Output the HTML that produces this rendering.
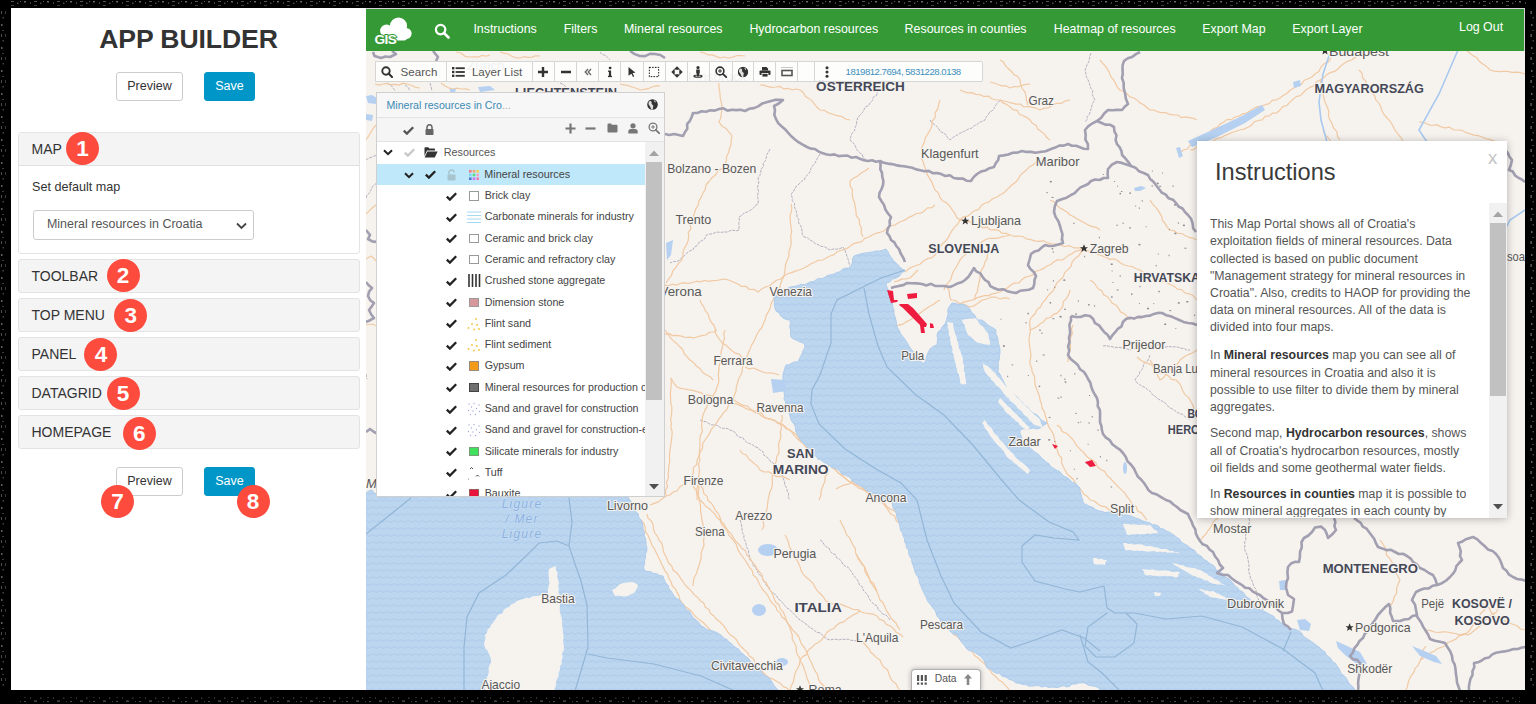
<!DOCTYPE html>
<html><head><meta charset="utf-8">
<style>
*{margin:0;padding:0;box-sizing:border-box}
html,body{width:1536px;height:704px;overflow:hidden;background:#000;font-family:"Liberation Sans",sans-serif}
.a{position:absolute}
#left{left:11px;top:8px;width:355px;height:682px;background:#fff}
#map{left:366px;top:8px;width:1159px;height:682px;overflow:hidden;background:#f6f3ef}
.title{left:0;width:355px;top:16px;text-align:center;font-weight:bold;font-size:26.6px;color:#333;letter-spacing:-0.1px}
.btn{height:29px;border:1px solid #ccc;border-radius:3px;background:#fff;color:#333;font-size:12.5px;text-align:center;line-height:27px}
.btnp{background:#0097c8;border-color:#0097c8;color:#fff}
.acc{left:7px;width:342px;height:34px;border:1px solid #e3e3e3;border-radius:3px;background:#f4f4f4}
.acc span{position:absolute;left:12.5px;top:7.5px;font-size:14px;color:#333}
.num{width:33px;height:33px;border-radius:50%;background:#fd4b3e;color:#fff;font-weight:bold;font-size:22.5px;text-align:center;line-height:33px}
.nav{top:14px;color:#fff;font-size:12.4px;white-space:nowrap}

.tb{top:53px;height:21px;background:rgba(255,255,255,0.8);border:1px solid #d6d6d6;border-right:none}
.tbb{position:absolute;top:0;height:19px;border-right:1px solid #d6d6d6}
.tbb svg{position:absolute;left:50%;top:50%;transform:translate(-50%,-50%)}
.tbt{position:absolute;top:2.6px;font-size:11.6px;color:#555;white-space:nowrap}
#lp{left:10px;top:84px;width:289px;height:405px;background:#fff;border:1px solid #d0d0d0;overflow:hidden}
.row{position:absolute;left:0;width:268px;height:21.3px}
.rt{position:absolute;left:108px;top:4px;font-size:10.7px;color:#444;white-space:nowrap}
.ck{position:absolute;left:69px;top:5px;line-height:0}
.ck svg{display:block}
.lg{position:absolute;left:92px;top:6px;width:10px;height:10px}
#ins{left:831px;top:133px;width:310px;height:376.5px;background:#fff;box-shadow:0 1px 8px rgba(0,0,0,0.28)}
.ip{position:absolute;left:13px;font-size:12.3px;line-height:17.2px;color:#555;white-space:nowrap}
.ip b{color:#333}
</style></head><body>
<svg class="a" style="left:0;top:0" width="1536" height="704">
<defs><pattern id="nz" width="23" height="5" patternUnits="userSpaceOnUse"><rect x="1" y="1" width="2" height="1.5" fill="#bbb"/><rect x="7" y="2" width="1" height="2" fill="#777"/><rect x="11" y="0.5" width="3" height="1.2" fill="#ddd"/><rect x="17" y="2.5" width="1.5" height="1.5" fill="#888"/><rect x="20" y="1" width="1" height="1" fill="#aaa"/></pattern>
<pattern id="nzv" width="5" height="23" patternUnits="userSpaceOnUse"><rect x="1" y="1" width="1.5" height="2" fill="#bbb"/><rect x="2" y="7" width="2" height="1" fill="#777"/><rect x="0.5" y="11" width="1.2" height="3" fill="#ddd"/><rect x="2.5" y="17" width="1.5" height="1.5" fill="#888"/></pattern></defs>
<rect x="10" y="1" width="1516" height="5" fill="url(#nz)" opacity="0.55"/>
<rect x="20" y="697" width="1500" height="5" fill="url(#nz)" opacity="0.4"/>
<rect x="1" y="10" width="5" height="680" fill="url(#nzv)" opacity="0.5"/>
<rect x="1529" y="10" width="5" height="680" fill="url(#nzv)" opacity="0.5"/>
</svg>
<div id="left" class="a">
  <div class="a title">APP BUILDER</div>
  <div class="a btn" style="left:105px;top:64px;width:67px">Preview</div>
  <div class="a btn btnp" style="left:193px;top:64px;width:51px">Save</div>

  <div class="a acc" style="top:124px;height:122px;background:#fff">
    <div class="a" style="left:0;top:0;width:340px;height:33px;background:#f4f4f4;border-bottom:1px solid #e0e0e0"></div>
    <span>MAP</span>
    <div class="a" style="left:13px;top:46.5px;font-size:12.6px;color:#333">Set default map</div>
    <div class="a" style="left:14px;top:77px;width:221px;height:30px;border:1px solid #ccc;border-radius:3px;background:#fff">
      <div class="a" style="left:13px;top:5.5px;font-size:12.45px;color:#555">Mineral resources in Croatia</div>
      <svg class="a" style="left:202px;top:11px" width="11" height="8" viewBox="0 0 11 8"><path d="M1 1.5 L5.5 6 L10 1.5" stroke="#444" stroke-width="1.8" fill="none"/></svg>
    </div>
  </div>
  <div class="a acc" style="top:251px"><span>TOOLBAR</span></div>
  <div class="a acc" style="top:290px"><span>TOP MENU</span></div>
  <div class="a acc" style="top:329px"><span>PANEL</span></div>
  <div class="a acc" style="top:368px"><span>DATAGRID</span></div>
  <div class="a acc" style="top:407px"><span>HOMEPAGE</span></div>

  <div class="a btn" style="left:105px;top:459px;width:67px">Preview</div>
  <div class="a btn btnp" style="left:193px;top:459px;width:51px">Save</div>

  <div class="a num" style="left:55.1px;top:124px">1</div>
  <div class="a num" style="left:95.5px;top:251.2px">2</div>
  <div class="a num" style="left:103.2px;top:290.7px">3</div>
  <div class="a num" style="left:73.4px;top:329.9px">4</div>
  <div class="a num" style="left:95.5px;top:369.1px">5</div>
  <div class="a num" style="left:111.7px;top:408.5px">6</div>
  <div class="a num" style="left:90.1px;top:476.9px">7</div>
  <div class="a num" style="left:225.5px;top:476.9px">8</div>
</div>

<div id="map" class="a">
  <!-- MAPSVG -->
<svg class="a" style="left:0;top:0" width="1159" height="682" viewBox="366 8 1159 682">
<defs><pattern id="wv" width="7.1" height="7" patternUnits="userSpaceOnUse"><path d="M0 4.8 Q3.55 0.6 7.1 4.8" stroke="#afcbe9" stroke-width="0.9" fill="none"/></pattern></defs>
<rect x="366" y="8" width="1159" height="682" fill="#f6f3ef"/>
<polyline points="366.0,160.0 368.8,158.2 372.0,157.0 377.0,155.0" fill="none" stroke="#b3b1c0" stroke-width="1" stroke-dasharray="3 1"/>
<polyline points="366.0,198.0 367.1,195.0 369.6,192.8 371.0,190.0 372.3,186.8 375.1,184.7 377.0,182.0" fill="none" stroke="#b3b1c0" stroke-width="1" stroke-dasharray="3 1"/>
<polyline points="366.0,374.0 367.0,379.0" fill="none" stroke="#b3b1c0" stroke-width="1" stroke-dasharray="3 1"/>
<polyline points="387.0,83.0 389.4,84.8 392.1,86.3 393.7,89.0 396.0,91.0" fill="none" stroke="#b3b1c0" stroke-width="1" stroke-dasharray="3 1"/>
<polyline points="405.0,85.0 408.2,87.4 410.0,91.0" fill="none" stroke="#b3b1c0" stroke-width="1" stroke-dasharray="3 1"/>
<polyline points="430.0,83.0 431.1,87.0 432.0,91.0" fill="none" stroke="#b3b1c0" stroke-width="1" stroke-dasharray="3 1"/>
<polyline points="560.0,83.0 563.0,84.3 565.5,86.4 567.6,88.9 570.0,91.0" fill="none" stroke="#b3b1c0" stroke-width="1" stroke-dasharray="3 1"/>
<polyline points="600.0,52.0 602.1,54.5 605.5,55.4 607.8,57.6 610.0,60.0" fill="none" stroke="#b3b1c0" stroke-width="1" stroke-dasharray="3 1"/>
<polyline points="770.0,149.0 768.6,151.8 766.8,154.5 766.3,157.6 765.4,160.7 763.1,163.1 763.6,166.7 760.9,169.0 760.8,172.4 759.9,175.4 758.0,178.0 758.8,181.2 758.4,184.5 757.4,187.8 758.6,191.0 757.8,194.2 757.7,197.5 758.3,200.8 758.0,204.0 755.2,205.8 753.1,208.4 750.4,210.3 747.5,211.9 744.2,213.0 741.8,215.3 739.0,217.0 739.4,220.2 738.8,223.5 739.1,226.8 739.0,230.0 736.1,230.8 732.9,230.2 729.9,230.8 727.1,232.1 724.0,231.9 721.0,232.4 717.9,232.1 714.9,232.7 712.1,234.0 709.0,234.0 705.9,235.5 704.7,238.9 701.9,240.6 699.0,242.3 697.4,245.4 694.5,247.0 692.7,249.9 689.4,251.1 686.9,253.1 684.7,255.6 681.9,257.3 680.0,260.0 676.8,261.4 673.2,261.6 670.0,263.0" fill="none" stroke="#b3b1c0" stroke-width="1" stroke-dasharray="3 1"/>
<polyline points="820.0,154.0 818.2,156.9 816.5,159.9 815.1,163.0 812.7,165.7 810.9,168.6 810.0,172.0 807.9,174.5 805.5,176.7 804.3,179.9 801.3,181.5 799.2,184.0 796.6,186.0 794.7,188.7 793.4,191.8 791.0,194.0 792.1,197.2 792.4,200.7 794.5,203.6 794.5,207.1 795.9,210.3 796.9,213.5 797.0,217.0 798.8,219.6 798.5,222.9 800.7,225.3 801.5,228.3 802.2,231.2 802.3,234.4 804.0,237.0 807.3,237.7 809.8,239.8 812.6,241.4 815.2,243.5 818.2,244.8 821.0,246.3 824.4,246.7 827.2,248.4 830.0,250.0 833.2,249.0 836.7,249.2 840.0,248.6 843.0,247.0 844.8,249.9 845.9,253.1 847.0,256.3 848.2,259.5 848.9,262.8 850.0,266.0" fill="none" stroke="#b3b1c0" stroke-width="1" stroke-dasharray="3 1"/>
<polyline points="1091.0,53.0 1089.8,55.8 1089.4,58.8 1088.9,61.8 1087.2,64.4 1086.2,67.3 1085.0,70.0 1085.9,73.0 1086.1,76.3 1087.6,79.1 1089.0,82.0 1089.8,85.1 1090.7,88.1 1092.8,90.7 1092.2,94.3 1093.5,97.2 1095.0,100.0 1093.1,102.4 1092.0,105.3 1091.4,108.3 1090.2,111.1 1089.5,114.1 1087.3,116.4 1087.0,119.6 1085.0,122.0" fill="none" stroke="#b3b1c0" stroke-width="1" stroke-dasharray="3 1"/>
<polyline points="1103.0,346.0 1106.1,345.6 1109.1,346.3 1112.1,346.7 1115.0,347.5 1118.1,347.3 1121.1,347.7 1124.1,348.4 1127.1,348.8 1130.0,350.0 1133.0,349.2 1135.8,348.1 1139.1,349.2 1142.0,348.2 1144.9,346.8 1147.9,346.5 1150.9,346.2 1154.0,345.7 1156.9,344.8 1160.0,345.0 1162.9,346.2 1165.8,347.0 1169.0,346.4 1172.0,347.0 1175.1,346.7 1178.1,347.2 1181.1,348.2 1184.1,348.5 1186.9,350.1 1190.0,350.0" fill="none" stroke="#b3b1c0" stroke-width="1" stroke-dasharray="3 1"/>
<polyline points="1150.0,355.0 1148.9,358.1 1147.5,361.0 1144.2,362.9 1143.3,366.1 1142.3,369.3 1139.9,371.6 1139.1,374.9 1136.6,377.2 1135.0,380.0 1136.9,382.7 1139.5,384.6 1142.3,386.3 1145.3,387.6 1147.7,389.8 1150.4,391.5 1152.2,394.4 1155.0,396.1 1157.2,398.4 1160.0,400.0 1162.7,401.4 1165.3,402.9 1167.2,405.5 1169.5,407.5 1172.1,408.9 1174.7,410.5 1177.1,412.2 1179.7,413.7 1182.8,414.5 1185.0,416.7 1187.7,418.1 1190.0,420.0" fill="none" stroke="#b3b1c0" stroke-width="1" stroke-dasharray="3 1"/>
<polyline points="1249.0,518.0 1249.5,521.1 1249.0,524.1 1248.1,527.1 1247.7,530.1 1246.4,532.9 1245.4,535.9 1246.0,539.0 1244.6,541.9 1245.0,545.0 1244.5,548.2 1245.1,551.1 1246.8,554.0 1247.6,556.9 1248.0,559.9 1248.6,562.9 1249.1,565.9 1248.8,569.0 1248.7,572.1 1250.0,575.0 1250.4,578.2 1252.2,580.8 1253.0,583.9 1253.8,586.9 1256.2,589.3 1256.2,592.6 1256.8,595.7 1258.1,598.5 1259.3,601.4 1260.9,604.2 1262.5,606.9 1263.0,610.0" fill="none" stroke="#b3b1c0" stroke-width="1" stroke-dasharray="3 1"/>
<polyline points="700.0,420.0 702.8,421.5 706.1,421.7 708.8,423.6 711.7,424.9 715.1,424.8 718.1,425.8 720.7,427.8 723.9,428.4 727.2,428.4 730.0,430.0 732.9,431.0 735.4,432.8 737.1,435.7 739.7,437.2 742.9,437.7 744.6,440.5 747.0,442.5 749.8,443.6 752.7,444.8 754.9,446.7 757.9,447.7 760.0,450.0 762.9,451.5 763.8,455.1 766.5,456.9 768.9,458.9 770.5,461.7 773.4,463.2 775.0,466.1 777.3,468.2 780.0,470.0 781.5,472.8 782.5,475.8 783.4,478.9 784.5,481.8 784.8,485.1 786.5,487.8 787.2,490.9 788.7,493.8 788.2,497.3 790.0,500.0" fill="none" stroke="#b3b1c0" stroke-width="1" stroke-dasharray="3 1"/>
<polyline points="740.0,520.0 741.1,523.0 741.6,526.1 742.1,529.3 742.3,532.5 744.0,535.3 743.8,538.7 745.4,541.5 746.1,544.6 746.9,547.7 748.6,550.5 748.6,553.8 749.8,556.8 750.0,560.0 752.5,561.9 752.8,565.3 755.5,567.1 756.7,570.0 758.0,572.7 759.9,575.1 762.0,577.3 763.3,580.0 764.9,582.6 766.2,585.3 769.0,587.1 770.0,590.0 772.1,592.2 774.6,593.9 776.7,596.1 778.2,599.0 780.7,600.7 782.8,602.9 784.6,605.4 786.6,607.7 789.4,609.2 791.3,611.6 793.6,613.6 795.7,615.7 797.6,618.1 800.0,620.0 802.6,621.6 805.0,623.4 807.5,625.0 809.5,627.4 812.3,628.7 814.6,630.6 817.0,632.4 820.3,632.9 822.4,635.1 824.5,637.4 827.1,638.9 830.0,640.0 833.0,639.3 836.0,639.2 839.0,639.9 842.0,639.1 845.0,639.5 848.0,639.1 851.0,640.3 854.0,640.6 857.0,640.8 860.0,640.0" fill="none" stroke="#b3b1c0" stroke-width="1" stroke-dasharray="3 1"/>
<polyline points="820.0,540.0 822.6,541.7 824.0,544.6 826.2,546.7 829.1,548.1 830.2,551.3 832.2,553.5 835.4,554.6 836.5,557.8 839.4,559.1 841.4,561.4 842.9,564.3 845.2,566.2 848.3,567.4 850.0,570.0 851.8,572.4 853.3,575.0 855.3,577.3 857.2,579.7 858.6,582.3 859.6,585.2 862.5,587.0 863.2,590.1 865.1,592.4 867.5,594.5 868.6,597.3 870.0,600.0 872.0,602.4 874.4,604.5 877.3,606.1 878.2,609.6 880.7,611.5 882.7,614.0 886.1,615.0 888.1,617.4 890.0,620.0" fill="none" stroke="#b3b1c0" stroke-width="1" stroke-dasharray="3 1"/>
<polyline points="866.0,160.0 863.3,158.1 862.4,154.7 859.6,152.8 857.4,150.5 855.9,147.6 854.6,144.5 852.5,142.1 850.0,140.0 850.8,136.7 851.8,133.5 854.5,130.9 855.1,127.6 856.6,124.5 856.7,120.9 857.9,117.8 860.0,115.0 862.3,112.7 863.9,109.9 865.3,107.0 868.7,105.5 870.2,102.7 872.5,100.4 873.3,97.0 876.6,95.4 877.3,92.0 880.0,90.0" fill="none" stroke="#b3b1c0" stroke-width="1" stroke-dasharray="3 1"/>
<polyline points="930.0,120.0 931.7,122.7 934.5,124.4 936.9,126.4 938.8,129.0 940.5,131.7 943.7,133.0 946.1,135.0 947.7,137.8 950.0,140.0 952.4,138.0 955.0,136.2 957.7,134.8 960.3,133.1 963.2,131.8 966.0,130.4 968.7,128.9 971.8,128.1 974.0,125.8 976.9,124.6 979.3,122.5 982.2,121.3 985.0,120.0 986.1,116.9 988.4,114.7 989.8,111.9 992.9,110.3 994.5,107.6 995.8,104.6 998.1,102.5 1000.0,100.0" fill="none" stroke="#b3b1c0" stroke-width="1" stroke-dasharray="3 1"/>
<polyline points="660.0,333.0 664.1,334.6 668.6,333.4 672.6,335.6 677.0,335.4 681.3,336.1 685.4,337.5 689.8,337.1 694.0,338.0 697.8,336.7 701.8,335.7 705.8,335.0 709.2,332.3 713.4,332.0 717.0,330.0" fill="none" stroke="#f1c9a3" stroke-width="1.2" stroke-linejoin="round"/>
<polyline points="671.0,378.0 673.6,382.8 677.0,387.0 680.8,388.4 684.9,389.0 688.9,389.9 693.0,390.4 696.8,391.6 700.8,392.6 704.3,395.0 708.5,395.1 712.5,396.0 716.5,396.9 720.0,399.6 723.9,400.7 728.0,401.0 731.7,403.0 735.9,403.8 739.8,405.4 743.6,407.2 747.3,409.1 751.4,410.2 755.0,412.4 759.1,413.7 762.3,416.7 766.2,418.4 770.4,419.2 774.5,420.2 777.7,423.3 782.0,424.0 785.2,426.5 788.0,429.3 791.4,431.5 793.7,434.9 796.5,437.8 799.3,440.7 802.7,443.0 805.1,446.2 808.0,449.0 812.0,450.8 815.0,453.9 818.6,456.2 821.6,459.4 825.4,461.4 828.8,464.0 831.8,467.1 835.3,469.6 838.2,472.9 841.6,475.4 845.0,478.0 848.2,480.8 851.8,482.9 855.2,485.3 858.5,487.9 862.6,489.4 866.2,491.6 868.9,495.1 873.4,495.9 876.2,499.2 879.8,501.4 884.1,502.6 886.6,506.4 890.0,508.8 893.8,510.6 897.2,513.1 901.0,515.0" fill="none" stroke="#f1c9a3" stroke-width="1.2" stroke-linejoin="round"/>
<polyline points="725.0,330.0 723.7,334.0 724.6,338.3 723.2,342.2 722.7,346.3 721.4,350.3 720.9,354.3 720.3,358.4 720.2,362.5 719.0,366.5 718.9,370.7 718.3,374.7 718.7,378.9 718.6,383.1 717.0,387.0 715.7,391.4 713.3,395.1 711.8,399.4 708.3,402.7 706.9,406.9 704.7,410.9 703.0,415.0 702.3,419.1 701.7,423.2 701.7,427.4 702.4,431.7 700.2,435.6 699.9,439.8 700.0,444.0 699.8,448.0 699.5,452.0 699.0,456.0 700.1,460.1 698.4,464.0 699.3,468.0 699.4,472.1 698.8,476.0 697.6,480.0 698.5,484.0 697.1,488.0 696.4,491.9 697.2,496.0 697.0,500.0" fill="none" stroke="#f1c9a3" stroke-width="1.2" stroke-linejoin="round"/>
<polyline points="671.0,378.0 671.3,382.1 671.0,386.2 670.6,390.4 670.4,394.5 670.7,398.6 670.7,402.8 671.9,406.9 671.8,411.0 671.5,415.1 670.5,419.2 671.4,423.4 670.9,427.5 672.1,431.6 672.0,435.8 671.5,439.9 671.0,444.0 670.2,448.2 669.7,452.5 669.4,456.7 669.8,461.0 668.9,465.2 668.6,469.5 668.2,473.8 668.5,478.1 666.4,482.2 667.5,486.6 665.4,490.6 666.0,495.0" fill="none" stroke="#f1c9a3" stroke-width="1.2" stroke-linejoin="round"/>
<polyline points="745.0,367.0 749.0,368.9 753.7,368.0 757.8,369.9 761.8,371.7 766.0,373.0 770.5,372.9 774.9,373.5 779.0,375.0" fill="none" stroke="#f1c9a3" stroke-width="1.2" stroke-linejoin="round"/>
<polyline points="782.0,415.0 782.3,419.3 780.3,423.4 781.5,427.8 780.3,432.0 780.9,436.3 779.7,440.5 778.4,444.7 779.0,449.0 778.9,453.1 776.6,456.7 776.4,460.8 774.8,464.5 774.3,468.5 774.5,472.7 772.2,476.3 772.3,480.4 772.4,484.5 771.6,488.5 769.7,492.2 769.0,496.1 768.0,500.0 767.6,504.4 767.1,508.7 765.8,512.9 765.0,517.2 763.0,521.3 763.9,525.9 762.0,530.0" fill="none" stroke="#f1c9a3" stroke-width="1.2" stroke-linejoin="round"/>
<polyline points="830.0,461.0 828.5,464.9 827.3,468.8 827.8,473.2 825.1,476.8 825.0,481.0 823.1,485.6 821.2,490.2 820.9,495.4 819.0,500.0" fill="none" stroke="#f1c9a3" stroke-width="1.2" stroke-linejoin="round"/>
<polyline points="836.0,489.0 840.1,486.7 844.4,484.8 849.2,484.0 853.0,481.0 855.9,478.1 858.4,474.8 861.3,471.9 863.8,468.7 867.0,466.0" fill="none" stroke="#f1c9a3" stroke-width="1.2" stroke-linejoin="round"/>
<polyline points="698.0,483.0 701.0,485.9 703.1,489.4 703.9,493.6 707.1,496.4 708.0,500.6 711.5,503.2 713.6,506.6 715.3,510.3 718.1,513.4 719.9,517.0 721.0,521.1 724.0,524.0 725.9,527.9 728.6,531.2 731.5,534.4 733.6,538.2 736.1,541.7 739.4,544.6 741.7,548.2 745.5,550.7 746.8,555.1 749.9,558.1 752.0,561.9 755.0,565.0 756.9,568.8 759.7,572.0 762.3,575.4 762.8,580.0 766.4,582.8 767.9,586.8 770.3,590.3 772.5,593.9 773.8,598.1 775.5,602.0 779.0,604.8 780.4,608.9 783.2,612.1 785.0,616.0 786.2,619.9 787.9,623.6 789.7,627.3 791.0,631.1 792.3,635.0 792.2,639.3 794.3,642.8 796.2,646.5 796.2,650.8 797.3,654.7 799.8,658.1 801.0,662.0 803.2,665.9 804.5,670.1 806.1,674.1 807.0,678.5 809.0,682.4 810.1,686.7 811.0,691.0" fill="none" stroke="#f1c9a3" stroke-width="1.2" stroke-linejoin="round"/>
<polyline points="698.0,483.0 698.9,487.1 698.6,491.3 698.4,495.5 699.1,499.6 700.2,503.6 700.6,507.8 700.7,511.9 701.5,516.0 702.0,520.2 703.0,524.2 702.9,528.4 701.8,532.7 704.0,536.7 703.6,540.9 704.0,545.0 702.6,549.0 701.0,553.0 701.3,557.5 700.1,561.5 699.0,565.6 697.6,569.7 696.4,573.7 694.2,577.5 693.4,581.7 693.0,586.0" fill="none" stroke="#f1c9a3" stroke-width="1.2" stroke-linejoin="round"/>
<polyline points="647.0,514.0 648.0,518.1 651.4,521.0 653.1,524.8 653.5,529.1 654.9,533.0 657.5,536.4 659.0,540.2 661.9,543.4 662.8,547.5 663.5,551.7 665.4,555.4 667.1,559.1 668.6,563.0 671.8,566.0 673.0,570.0 676.4,572.5 679.0,575.6 681.2,579.2 683.6,582.5 685.9,586.0 689.0,588.7 691.9,591.7 694.4,594.9 697.7,597.5 700.2,600.7 703.8,603.1 705.3,607.2 709.0,609.5 710.6,613.5 714.0,616.0 716.5,619.3 719.8,621.8 722.8,624.7 725.3,627.9 727.4,631.5 730.1,634.7 733.8,636.9 736.6,639.9 738.6,643.6 741.2,646.8 744.3,649.6 747.3,652.4 749.4,656.0 753.1,658.2 755.0,662.0" fill="none" stroke="#f1c9a3" stroke-width="1.2" stroke-linejoin="round"/>
<polyline points="785.0,535.0 787.2,538.7 788.6,542.7 789.4,547.1 791.8,550.7 793.1,554.8 795.7,558.3 798.0,562.0 799.7,565.9 801.0,570.0 803.0,574.1 806.2,577.2 809.7,580.1 812.9,583.1 814.9,587.2 817.4,590.9 820.6,594.0 823.6,597.2 826.0,601.0 829.8,602.5 833.6,604.2 837.9,603.9 842.0,604.6 845.7,606.4 849.6,607.8 853.3,609.5 857.6,609.6 861.1,612.0 865.1,613.0 869.2,613.7 873.3,614.2 877.0,616.0 879.6,619.4 883.8,620.9 886.3,624.4 890.4,626.0 893.6,628.6 896.1,632.2 900.0,634.0 903.0,637.0" fill="none" stroke="#f1c9a3" stroke-width="1.2" stroke-linejoin="round"/>
<polyline points="857.0,555.0 858.1,559.1 861.0,562.2 863.6,565.5 865.5,569.1 867.2,572.9 868.7,576.8 870.1,580.7 873.7,583.4 875.2,587.3 877.0,591.0" fill="none" stroke="#f1c9a3" stroke-width="1.2" stroke-linejoin="round"/>
<polyline points="1057.0,425.0 1060.4,427.5 1062.2,431.6 1066.4,433.3 1069.5,436.1 1072.4,439.0 1074.8,442.5 1077.0,446.2 1080.0,449.2 1083.1,451.9 1085.7,455.2 1088.7,458.1 1092.6,460.1 1095.8,462.8 1097.5,466.9 1100.8,469.5 1104.8,471.4 1106.8,475.3 1110.0,478.0 1113.0,481.1 1115.9,484.3 1118.8,487.4 1121.9,490.4 1125.1,493.4 1127.4,497.1 1130.2,500.4 1132.0,504.5 1136.2,506.5 1137.7,511.0 1141.8,513.1 1144.4,516.6 1147.0,520.0" fill="none" stroke="#f1c9a3" stroke-width="1.2" stroke-linejoin="round"/>
<polyline points="1137.0,357.0 1140.1,359.8 1143.6,361.9 1147.6,363.4 1151.5,364.8 1154.5,367.8 1158.1,369.8 1161.0,373.0 1165.4,373.8 1168.7,376.2 1171.5,379.4 1176.0,380.0 1179.0,383.0 1181.3,386.6 1182.7,390.8 1184.9,394.4 1188.4,397.4 1190.6,401.1 1192.7,404.8 1194.0,409.0" fill="none" stroke="#f1c9a3" stroke-width="1.2" stroke-linejoin="round"/>
<polyline points="1073.0,325.0 1071.5,329.0 1072.4,333.3 1070.8,337.3 1069.9,341.3 1070.6,345.6 1070.2,349.7 1068.1,353.6 1068.3,357.9 1068.0,362.0" fill="none" stroke="#f1c9a3" stroke-width="1.2" stroke-linejoin="round"/>
<polyline points="1242.0,593.0 1244.6,596.2 1245.9,600.3 1248.8,603.3 1251.1,606.7 1253.8,609.9 1254.5,614.3 1256.4,618.0 1259.1,621.2 1260.7,625.0 1264.6,627.4 1266.3,631.2 1268.0,635.0" fill="none" stroke="#f1c9a3" stroke-width="1.2" stroke-linejoin="round"/>
<polyline points="1426.0,630.0 1430.2,630.4 1434.3,632.0 1438.5,632.5 1442.8,631.8 1447.1,632.0 1451.2,632.8 1455.4,633.5 1459.5,634.9 1463.9,633.8 1468.0,635.0 1471.5,632.9 1474.5,630.2 1477.7,627.8 1480.7,625.1 1483.6,622.3 1486.3,619.2 1489.3,616.6 1492.5,614.1 1496.1,612.2 1498.2,608.5 1501.5,606.1 1505.0,604.0" fill="none" stroke="#f1c9a3" stroke-width="1.2" stroke-linejoin="round"/>
<polyline points="1405.0,691.0 1407.3,687.5 1408.0,683.3 1409.4,679.3 1411.1,675.6 1413.9,672.3 1415.2,668.3 1418.2,665.2 1419.8,661.4 1421.7,657.7 1422.0,653.3 1423.4,649.4 1426.0,646.0" fill="none" stroke="#f1c9a3" stroke-width="1.2" stroke-linejoin="round"/>
<polyline points="1050.0,200.0 1053.9,201.8 1056.7,205.0 1059.7,207.9 1063.4,209.9 1067.0,212.0 1070.0,215.0 1073.8,216.7 1077.4,219.0 1081.1,221.0 1084.8,223.0 1088.4,225.1 1092.3,226.6 1096.6,227.4 1100.0,230.0" fill="none" stroke="#f1c9a3" stroke-width="1.2" stroke-linejoin="round"/>
<polyline points="990.0,250.0 987.6,253.9 987.1,258.5 984.9,262.4 983.6,266.8 981.2,270.6 980.0,275.0 979.8,279.3 978.9,283.4 978.0,287.6 977.4,291.8 975.0,295.7 975.0,300.0" fill="none" stroke="#f1c9a3" stroke-width="1.2" stroke-linejoin="round"/>
<polyline points="366.0,140.0 368.6,136.1 371.0,132.0 373.2,128.3 376.0,125.0" fill="none" stroke="#f1c9a3" stroke-width="1.2" stroke-linejoin="round"/>
<polyline points="366.0,214.0 371.0,209.0 377.0,204.0" fill="none" stroke="#f1c9a3" stroke-width="1.2" stroke-linejoin="round"/>
<polyline points="366.0,259.0 371.0,256.0 374.2,258.8 377.0,262.0" fill="none" stroke="#f1c9a3" stroke-width="1.2" stroke-linejoin="round"/>
<polyline points="366.0,325.0 372.0,324.0 377.0,326.0" fill="none" stroke="#f1c9a3" stroke-width="1.2" stroke-linejoin="round"/>
<polyline points="375.0,84.0 379.0,85.1 383.0,84.0 387.0,83.4 391.0,84.7 395.0,84.3 399.0,85.1 403.0,83.1 407.0,84.0 411.3,85.3 415.5,87.3 420.0,88.0" fill="none" stroke="#f1c9a3" stroke-width="1.2" stroke-linejoin="round"/>
<polyline points="441.0,83.0 444.7,85.7 448.6,87.8 453.0,89.0 457.3,88.2 461.5,89.0 465.8,88.9 470.0,90.0" fill="none" stroke="#f1c9a3" stroke-width="1.2" stroke-linejoin="round"/>
<polyline points="456.0,52.0 460.9,53.0 465.0,56.3 470.0,57.0 474.0,56.8 478.1,57.1 482.0,55.5 486.1,56.2 490.0,55.0" fill="none" stroke="#f1c9a3" stroke-width="1.2" stroke-linejoin="round"/>
<polyline points="500.0,52.0 504.0,53.1 508.2,53.9 511.8,56.2 515.7,57.7 520.0,58.0 523.9,56.7 528.0,57.4 532.0,57.1 535.9,55.8 540.0,56.0" fill="none" stroke="#f1c9a3" stroke-width="1.2" stroke-linejoin="round"/>
<polyline points="620.0,84.0 624.1,84.9 628.2,85.6 632.2,87.0 636.2,88.3 640.0,90.0 644.0,89.4 648.1,88.7 651.9,87.0 655.8,85.7 660.0,86.0" fill="none" stroke="#f1c9a3" stroke-width="1.2" stroke-linejoin="round"/>
<polyline points="700.0,52.0 704.1,52.8 707.9,54.8 712.2,54.9 716.1,56.4 720.0,58.0 724.1,57.0 728.4,58.0 732.5,57.1 736.6,55.7 740.8,55.5 745.0,56.0" fill="none" stroke="#f1c9a3" stroke-width="1.2" stroke-linejoin="round"/>
<polyline points="990.0,82.0 994.1,83.0 998.0,84.5 1001.9,85.9 1006.3,85.9 1010.0,88.0 1013.9,86.5 1018.1,86.8 1022.0,85.4 1025.9,84.3 1030.0,84.0" fill="none" stroke="#f1c9a3" stroke-width="1.2" stroke-linejoin="round"/>
<polyline points="1180.0,153.0 1183.1,150.3 1187.3,149.0 1189.9,145.5 1193.6,143.6 1196.7,140.8 1200.2,138.5 1204.2,137.0 1207.7,134.8 1210.3,131.3 1213.5,128.6 1217.5,127.2 1220.2,123.9 1224.0,122.0 1227.3,119.4 1231.8,119.6 1235.1,117.0 1239.2,116.2 1242.6,113.8 1246.7,113.2 1250.1,110.7 1253.6,108.5 1257.2,106.6 1261.4,106.1 1265.2,104.7 1269.2,103.6 1272.2,100.4 1276.4,99.8 1280.0,98.0 1283.3,95.4 1287.0,93.2 1290.1,90.2 1293.7,88.0 1297.5,86.0 1301.5,84.4 1304.0,80.5 1308.0,78.8 1311.9,77.0 1315.0,74.0 1318.9,71.5 1320.9,67.1 1324.0,63.8 1328.5,61.9 1331.0,58.0" fill="none" stroke="#f1c9a3" stroke-width="1.2" stroke-linejoin="round"/>
<polyline points="1323.0,130.0 1324.8,134.6 1328.4,138.0 1331.0,142.0" fill="none" stroke="#f1c9a3" stroke-width="1.2" stroke-linejoin="round"/>
<polyline points="1359.0,70.0 1362.0,73.2 1362.5,77.9 1365.7,81.0 1366.8,85.2 1369.5,88.6 1371.3,92.5 1374.7,95.5 1375.7,99.9 1378.9,102.9 1380.7,106.8 1382.0,111.0 1384.2,114.7 1387.0,118.0 1389.9,121.0 1392.1,124.5 1394.0,128.2 1396.1,131.7 1398.6,135.0 1401.4,138.1 1403.0,142.0" fill="none" stroke="#f1c9a3" stroke-width="1.2" stroke-linejoin="round"/>
<polyline points="1419.0,122.0 1423.4,122.3 1427.6,124.3 1431.8,125.5 1436.5,124.6 1440.6,126.6 1444.9,127.9 1449.5,127.2 1453.5,129.8 1458.0,130.0 1462.2,130.4 1465.9,132.6 1470.0,133.7 1473.9,135.1 1478.1,135.6 1482.1,137.0 1485.9,138.6 1490.0,139.4 1493.9,141.1 1498.0,142.0" fill="none" stroke="#f1c9a3" stroke-width="1.2" stroke-linejoin="round"/>
<polyline points="1466.0,50.0 1469.5,52.8 1472.9,55.6 1477.0,57.8 1479.5,61.6 1483.2,64.3 1486.9,66.7 1490.0,70.0 1494.3,71.1 1498.7,71.6 1503.1,71.4 1507.6,71.3 1511.9,72.4 1516.3,72.1 1520.7,72.7 1525.0,74.0" fill="none" stroke="#f1c9a3" stroke-width="1.2" stroke-linejoin="round"/>
<polyline points="894.0,282.0 898.0,280.9 901.8,279.1 906.0,278.9 910.0,278.0 914.0,274.0 918.0,270.0" fill="none" stroke="#f1c9a3" stroke-width="1.2" stroke-linejoin="round"/>
<polyline points="947.0,287.0 949.3,291.0 949.4,295.8 951.0,300.0 955.3,300.5 958.8,303.2 963.0,304.0 970.0,307.0 974.5,305.6 978.4,303.0 982.2,300.1 986.8,299.0 991.0,297.0 995.8,297.2 1000.4,299.0 1005.3,297.7 1010.0,299.0" fill="none" stroke="#f1c9a3" stroke-width="1.2" stroke-linejoin="round"/>
<polyline points="1030.0,330.0 1033.8,328.4 1037.3,326.5 1040.3,323.8 1043.7,321.7 1046.3,318.3 1050.6,317.5 1053.3,314.4 1057.2,313.1 1060.0,310.0 1062.8,306.4 1063.3,301.7 1066.6,298.3 1068.8,294.4 1070.0,290.0" fill="none" stroke="#f1c9a3" stroke-width="1.2" stroke-linejoin="round"/>
<polyline points="1090.0,280.0 1093.5,282.2 1095.9,285.5 1098.2,289.0 1102.0,290.9 1103.7,294.9 1107.5,296.8 1110.0,300.0 1112.4,303.3 1116.3,305.2 1118.6,308.6 1120.8,312.1 1124.7,313.8 1127.5,316.8 1130.0,320.0" fill="none" stroke="#f1c9a3" stroke-width="1.2" stroke-linejoin="round"/>
<polyline points="1150.0,200.0 1152.2,203.3 1154.8,206.4 1157.5,209.4 1159.5,212.9 1161.7,216.3 1162.5,220.5 1165.2,223.6 1167.1,227.1 1170.0,230.0 1174.1,230.7 1177.5,233.4 1181.9,233.5 1185.4,235.8 1189.2,237.4 1193.2,238.3 1197.0,240.0" fill="none" stroke="#f1c9a3" stroke-width="1.2" stroke-linejoin="round"/>
<polyline points="1000.0,100.0 1002.9,102.9 1006.6,104.5 1009.9,106.8 1012.9,109.6 1017.1,110.4 1019.4,114.2 1023.2,115.8 1026.8,117.6 1030.0,120.0 1032.4,123.3 1036.1,125.3 1037.8,129.3 1041.3,131.5 1044.5,134.1 1046.7,137.6 1050.0,140.0" fill="none" stroke="#f1c9a3" stroke-width="1.2" stroke-linejoin="round"/>
<polyline points="940.0,100.0 938.7,104.3 937.8,108.8 935.2,112.7 935.2,117.5 932.2,121.2 931.9,125.9 930.0,130.0 927.9,133.9 925.4,137.6 924.4,141.9 922.5,145.9 921.0,150.0" fill="none" stroke="#f1c9a3" stroke-width="1.2" stroke-linejoin="round"/>
<polyline points="1100.0,60.0 1102.6,63.1 1105.4,66.1 1107.5,69.4 1109.5,72.9 1110.9,76.8 1113.5,79.9 1115.5,83.3 1117.1,87.1 1120.0,90.0 1123.8,91.5 1127.0,93.9 1129.8,96.9 1133.9,98.0 1137.3,100.2 1140.2,103.1 1143.8,104.8 1146.8,107.5 1150.0,110.0 1154.0,110.2 1157.8,111.8 1161.7,112.7 1165.8,112.7 1169.5,114.4 1173.5,114.9 1177.6,115.0 1181.1,117.6 1185.4,116.9 1189.3,117.6 1193.3,118.3 1197.0,120.0" fill="none" stroke="#f1c9a3" stroke-width="1.2" stroke-linejoin="round"/>
<polyline points="665.0,330.0 667.5,333.5 669.9,337.2 672.9,340.4 676.3,343.2 679.3,346.3 682.5,349.3 684.2,353.5 687.1,356.8 690.0,360.0 693.5,362.6 696.4,366.0 699.9,368.5 702.5,372.2 706.1,374.7 710.1,376.7 713.0,380.0" fill="none" stroke="#f1c9a3" stroke-width="1.2" stroke-linejoin="round"/>
<polyline points="740.0,450.0 742.2,453.5 746.4,455.0 748.5,458.6 751.6,461.3 754.7,463.9 757.8,466.5 760.0,470.0 764.1,472.0 768.9,471.8 772.8,474.4 776.8,476.6 781.7,476.4 785.9,477.9 790.0,480.0" fill="none" stroke="#f1c9a3" stroke-width="1.2" stroke-linejoin="round"/>
<polyline points="840.0,520.0 841.6,523.7 843.6,527.3 845.2,531.0 846.7,534.9 849.7,537.9 851.3,541.6 853.1,545.3 855.4,548.6 855.6,553.1 857.6,556.6 860.0,560.0 861.4,563.8 864.6,566.8 864.8,571.2 866.8,574.8 869.2,578.1 870.4,582.1 872.8,585.4 875.1,588.8 877.1,592.3 878.7,596.1 880.0,600.0 883.1,602.8 884.7,606.5 886.2,610.3 888.5,613.6 890.5,617.1 892.9,620.3 896.0,623.0 897.7,626.7 900.0,630.0" fill="none" stroke="#f1c9a3" stroke-width="1.2" stroke-linejoin="round"/>
<polyline points="790.0,690.0 791.3,685.7 793.5,681.6 794.3,677.2 795.2,672.7 797.4,668.7 799.5,664.6 800.0,660.0 802.6,656.6 806.6,654.6 808.2,650.2 811.6,647.6 814.6,644.6 818.4,642.4 821.7,639.7 824.4,636.4 826.7,632.7 830.0,630.0 833.8,628.5 836.5,625.2 839.7,622.9 843.8,621.9 846.8,619.1 850.2,617.0 853.5,614.7 857.3,613.1 860.0,610.0" fill="none" stroke="#f1c9a3" stroke-width="1.2" stroke-linejoin="round"/>
<polyline points="1200.0,541.0 1202.4,537.5 1205.6,534.4 1207.9,530.8 1210.6,527.5 1212.4,523.4 1215.0,520.0 1218.4,517.9 1221.3,515.1 1224.1,512.2 1227.1,509.5 1230.8,507.7 1233.2,504.3 1237.4,503.2 1240.0,500.0" fill="none" stroke="#f1c9a3" stroke-width="1.2" stroke-linejoin="round"/>
<polyline points="1380.0,540.0 1382.5,543.3 1384.6,546.8 1386.2,550.5 1386.4,555.0 1389.4,558.0 1391.6,561.5 1393.7,565.0 1395.4,568.6 1396.0,572.9 1397.9,576.5 1400.0,580.0 1398.2,584.1 1396.6,588.4 1396.6,593.2 1394.1,597.1 1393.1,601.5 1390.8,605.5 1390.0,610.0" fill="none" stroke="#f1c9a3" stroke-width="1.2" stroke-linejoin="round"/>
<polyline points="1480.0,600.0 1482.4,603.4 1485.1,606.3 1489.2,607.9 1490.9,612.0 1493.6,614.9 1496.5,617.8 1500.0,620.0 1504.5,620.9 1508.6,622.7 1512.8,624.2 1517.0,625.7 1520.5,629.0 1525.0,630.0" fill="none" stroke="#f1c9a3" stroke-width="1.2" stroke-linejoin="round"/>
<polyline points="719.0,83.0 718.9,87.7 719.9,92.2 720.1,96.9 721.1,101.4 722.0,106.0 721.7,110.1 721.4,114.2 720.6,118.2 719.0,122.0 721.8,125.9 726.0,128.6 729.0,132.2 732.0,136.0 731.2,140.2 731.0,144.5 729.5,148.6 728.5,152.7 726.5,156.6 726.3,160.9 725.0,165.0 722.1,168.6 717.9,171.0 715.5,175.0 711.8,177.8 709.0,181.5 706.0,185.0 705.3,189.4 702.9,193.1 701.3,197.1 698.9,200.8 698.2,205.1 695.8,208.8 694.5,213.0 693.0,217.0 692.6,221.1 690.2,224.6 690.9,228.9 688.3,232.4 688.7,236.7 688.1,240.7 686.6,244.5 684.4,248.1 683.0,251.8 683.0,256.0 681.5,260.4 678.2,263.7 675.7,267.6 672.7,271.1 671.4,275.7 668.4,279.1 666.0,283.0" fill="none" stroke="#f1c9a3" stroke-width="1.2" stroke-linejoin="round"/>
<polyline points="660.0,286.0 664.0,285.2 668.2,285.9 672.1,284.2 676.4,285.2 680.3,283.3 684.3,282.8 688.5,283.4 692.5,282.5 696.5,281.2 700.7,281.9 704.6,280.3 708.8,281.4 712.9,280.7 716.9,280.5 721.0,279.7 725.0,279.0 729.2,280.3 733.3,282.0 737.5,283.7 741.2,286.3 746.0,286.3 749.4,289.5 754.3,289.4 758.0,292.0 761.4,289.2 765.2,287.0 769.6,285.9 772.9,282.9 776.4,280.3 780.7,279.0 784.0,276.0 787.6,273.8 791.6,272.6 795.5,271.1 799.6,269.8 803.4,268.2 807.1,266.3 810.7,264.0 814.5,262.3 818.2,260.3 822.6,260.0 826.3,258.0 830.0,256.0 834.1,254.6 837.5,251.5 841.6,250.2 845.9,248.9 849.6,246.7 853.0,243.9 857.3,242.6 861.6,241.6 864.8,238.4 869.0,237.0 872.4,234.7 876.2,233.2 880.3,232.3 884.2,230.8 887.3,227.7 891.0,226.0 895.0,225.0 898.4,222.7 902.1,221.0 905.9,219.6 909.2,217.1 913.0,215.6 916.5,213.5 920.9,213.2 924.3,210.9 927.3,207.9 931.8,207.7 935.0,205.0" fill="none" stroke="#f1c9a3" stroke-width="1.2" stroke-linejoin="round"/>
<polyline points="791.0,204.0 791.9,208.0 791.3,212.0 789.9,216.0 790.4,220.0 790.5,224.0 791.1,228.0 791.7,232.0 790.7,236.0 791.0,240.0 791.1,244.2 790.1,248.1 788.9,252.0 788.9,256.2 787.3,260.0 785.7,263.9 785.1,267.9 784.8,272.0 784.0,276.0 782.0,279.9 780.6,284.0 779.5,288.3 776.9,291.9 775.6,296.1 773.1,299.8 771.1,303.6 770.3,308.1 768.3,311.9 766.2,315.8 765.0,320.0 763.3,323.7 761.9,327.5 759.1,330.7 757.0,334.2 755.4,337.9 753.7,341.6 751.6,345.1 750.1,348.9 748.4,352.6 746.9,356.4 745.0,360.0 744.2,364.0 742.3,367.7 742.2,372.0 740.4,375.7 738.4,379.3 737.4,383.3 736.3,387.2 735.9,391.4 734.4,395.1 733.0,399.0" fill="none" stroke="#f1c9a3" stroke-width="1.2" stroke-linejoin="round"/>
<polyline points="869.0,168.0 865.3,170.7 861.2,173.0 857.7,176.0 853.6,178.1 850.0,181.0 849.9,185.5 852.4,189.4 852.2,193.9 852.8,198.3 854.5,202.4 855.2,206.7 856.0,211.0 856.2,215.6 859.3,219.4 859.4,224.0 861.4,228.1 861.2,232.8 863.0,237.0" fill="none" stroke="#f1c9a3" stroke-width="1.2" stroke-linejoin="round"/>
<polyline points="733.0,399.0 729.9,401.9 728.3,405.8 726.7,409.7 723.5,412.6 721.3,416.0 718.6,419.2 716.6,422.9 714.1,426.2 711.4,429.3 709.6,433.1 707.5,436.7 705.0,440.0 702.6,443.7 702.6,448.2 700.1,451.9 699.2,456.1 697.0,459.8 696.8,464.3 693.5,467.6 693.3,472.1 692.4,476.3 690.0,480.0 692.4,483.8 694.2,487.9 697.0,491.5 698.2,495.9 700.0,500.0 703.0,502.7 705.4,506.0 708.8,508.3 711.8,511.1 714.7,513.9 716.8,517.5 720.0,520.0 721.5,524.1 724.5,527.3 727.3,530.6 728.5,534.9 731.6,538.1 734.2,541.5 736.6,545.0 737.7,549.4 739.9,553.1 742.5,556.5 745.0,560.0 747.3,563.6 749.4,567.3 752.3,570.6 753.2,575.1 756.6,578.0 758.4,582.0 760.3,585.8 762.6,589.5 765.5,592.7 768.1,596.1 770.0,600.0 772.4,603.4 775.7,606.2 776.9,610.4 780.3,613.1 781.9,617.1 785.4,619.7 787.7,623.2 790.4,626.3 792.6,629.9 795.6,632.9 798.4,636.0 800.0,640.0 801.5,644.1 804.3,647.5 806.3,651.3 808.1,655.2 809.7,659.2 811.7,663.0 813.2,667.1 815.1,670.9 817.6,674.5 818.4,678.9 820.5,682.7 823.9,685.7 825.0,690.0" fill="none" stroke="#f1c9a3" stroke-width="1.2" stroke-linejoin="round"/>
<polyline points="733.0,399.0 736.2,401.6 739.7,403.7 743.4,405.4 747.6,406.1 750.5,409.3 754.2,410.9 758.4,411.6 762.0,413.6 764.6,417.3 768.5,418.7 772.5,419.8 776.2,421.5 779.7,423.5 783.2,425.6 786.1,428.6 790.0,430.0 793.3,432.4 796.6,434.8 798.6,438.7 801.8,441.2 805.8,442.8 807.8,446.6 811.2,448.8 814.0,451.8 817.3,454.3 820.0,457.3 823.2,459.8 826.2,462.6 830.2,464.2 832.5,467.7 835.8,470.1 838.5,473.1 842.0,475.2 845.0,478.0 848.1,480.9 851.9,482.5 855.8,484.2 859.3,486.3 862.9,488.3 866.0,491.2 870.0,492.6 873.0,495.5 876.9,497.1 880.0,500.0 882.8,503.3 885.6,506.7 888.3,510.1 890.5,513.8 894.7,516.0 896.1,520.5 899.5,523.3 902.1,526.8 905.0,530.0 906.0,534.1 907.0,538.2 909.3,541.9 910.5,545.9 910.7,550.3 913.9,553.7 914.0,558.1 915.4,562.1 918.0,565.7 918.1,570.1 919.3,574.1 920.1,578.3 922.7,581.9 922.7,586.3 925.0,590.0 927.0,593.5 929.0,597.0 930.2,600.9 933.9,603.5 934.6,607.7 936.8,611.1 939.3,614.3 940.3,618.4 943.3,621.4 945.0,625.0 948.0,628.0 951.0,631.0 953.6,634.4 957.5,636.5 960.1,639.9 963.1,642.9 965.9,646.1 968.5,649.5 972.3,651.7 974.5,655.5 978.1,657.9 981.0,661.0 984.4,663.6 987.0,667.0 990.0,670.0 992.1,673.7 995.5,676.2 998.1,679.4 1001.7,681.7 1004.6,684.7 1007.5,687.7 1010.0,691.0" fill="none" stroke="#f1c9a3" stroke-width="1.2" stroke-linejoin="round"/>
<polyline points="690.0,480.0 686.6,482.3 683.2,484.8 679.6,487.0 677.3,490.8 673.0,492.1 670.0,495.0 665.6,496.2 662.0,498.9 658.4,501.9 654.2,503.4 650.0,505.0" fill="none" stroke="#f1c9a3" stroke-width="1.2" stroke-linejoin="round"/>
<polyline points="641.0,520.0 643.7,523.2 645.1,527.0 645.3,531.3 647.7,534.6 649.3,538.3 650.8,542.1 652.3,545.8 654.6,549.2 656.3,552.8 658.0,556.5 660.0,560.0 661.4,563.8 663.4,567.4 665.1,571.1 667.8,574.3 668.8,578.3 671.0,581.8 672.2,585.7 675.3,588.7 677.0,592.4 679.1,595.9 680.0,600.0 682.4,603.3 685.1,606.4 688.3,608.8 691.6,611.2 693.8,614.8 696.7,617.6 699.9,620.1 703.2,622.5 706.0,625.4 708.7,628.4 711.7,631.1 714.4,634.2 716.9,637.4 720.0,640.0 722.8,643.3 727.3,644.2 729.9,647.6 733.9,649.2 737.2,651.8 739.6,655.5 743.2,657.6 746.1,660.7 750.1,662.4 754.0,664.1 756.8,667.3 760.0,670.0 763.2,672.5 766.1,675.5 769.4,677.9 773.4,679.3 776.8,681.5 780.5,683.3 783.2,686.6 787.0,688.1 790.0,691.0" fill="none" stroke="#f1c9a3" stroke-width="1.2" stroke-linejoin="round"/>
<polyline points="960.0,220.0 964.1,220.4 968.0,221.3 971.9,222.4 975.3,225.0 979.5,225.0 982.8,227.9 987.2,227.2 990.5,230.0 994.8,229.6 998.8,230.5 1002.2,233.2 1006.3,233.3 1010.0,235.0 1014.1,236.3 1018.5,236.0 1022.7,236.5 1026.5,238.9 1030.7,239.6 1034.8,240.8 1039.1,241.3 1043.5,240.8 1047.4,242.8 1051.6,243.8 1055.9,244.1 1060.0,245.0 1064.5,246.5 1069.3,245.7 1073.7,247.8 1078.3,247.9 1083.0,248.0" fill="none" stroke="#f1c9a3" stroke-width="1.2" stroke-linejoin="round"/>
<polyline points="1083.0,248.0 1081.3,252.2 1078.8,255.7 1075.1,258.5 1072.2,261.8 1071.0,266.3 1068.0,269.6 1064.7,272.6 1063.2,276.9 1060.0,280.0 1056.9,282.9 1055.0,286.7 1053.3,290.6 1050.2,293.5 1047.4,296.6 1045.1,300.1 1042.2,303.1 1040.6,307.1 1037.0,309.6 1035.2,313.5 1032.2,316.5 1030.0,320.0 1029.7,324.0 1030.2,328.0 1030.3,332.0 1029.4,336.0 1029.0,340.0 1029.4,344.0 1029.9,348.0 1030.5,352.0 1031.0,356.0 1030.0,360.0 1030.0,364.3 1031.6,368.1 1032.3,372.2 1034.4,375.9 1034.8,380.1 1035.0,384.3 1036.3,388.2 1037.8,392.1 1039.4,395.9 1040.0,400.0 1041.5,403.8 1042.0,408.1 1044.4,411.6 1045.2,415.7 1046.7,419.5 1047.5,423.6 1049.1,427.4 1051.6,431.0 1053.5,434.6 1054.4,438.7 1055.4,442.7 1056.5,446.7 1057.4,450.8 1058.6,454.7 1061.8,458.0 1061.5,462.5 1063.0,466.3 1065.0,470.0 1067.2,473.9 1070.4,476.8 1073.7,479.7 1075.5,483.8 1078.4,487.1 1081.4,490.3 1083.7,493.9 1087.5,496.5 1090.0,500.0 1094.3,501.0 1097.7,503.8 1101.3,506.2 1105.7,506.8 1109.0,509.8 1112.7,512.0 1117.0,513.0" fill="none" stroke="#f1c9a3" stroke-width="1.2" stroke-linejoin="round"/>
<polyline points="960.0,220.0 958.0,223.8 954.8,226.9 952.2,230.3 950.1,234.0 948.0,237.9 945.4,241.3 942.1,244.2 939.5,247.6 937.6,251.6 935.0,255.0 931.7,257.9 927.2,258.7 923.5,260.9 920.3,264.0 916.2,265.5 912.1,267.0 908.3,269.1 905.0,272.0" fill="none" stroke="#f1c9a3" stroke-width="1.2" stroke-linejoin="round"/>
<polyline points="961.0,303.0 964.9,301.9 968.8,300.8 972.8,299.9 976.4,297.9 980.3,296.8 984.2,295.7 988.4,295.7 992.1,293.9 996.1,293.2 1000.0,292.0 1003.5,289.8 1007.3,288.0 1010.5,285.3 1014.1,283.1 1018.7,283.0 1021.7,279.8 1025.0,277.2 1029.2,276.3 1033.0,274.6 1036.0,271.3 1040.0,270.0 1043.7,268.4 1047.0,266.0 1050.8,264.5 1053.9,261.7 1057.4,259.9 1062.0,260.0 1065.5,257.9 1068.7,255.3 1072.3,253.6 1075.6,251.2 1079.7,250.4 1083.0,248.0" fill="none" stroke="#f1c9a3" stroke-width="1.2" stroke-linejoin="round"/>
<polyline points="1036.0,162.0 1033.1,164.9 1029.3,166.8 1026.6,169.8 1023.5,172.5 1020.3,175.0 1018.4,178.9 1015.7,182.0 1012.4,184.5 1009.5,187.3 1006.6,190.2 1003.7,193.0 1000.0,195.0 996.3,197.2 992.3,198.9 989.1,201.9 984.9,203.3 981.3,205.6 978.7,209.4 974.4,210.7 971.0,213.4 967.7,216.2 963.1,216.9 960.0,220.0" fill="none" stroke="#f1c9a3" stroke-width="1.2" stroke-linejoin="round"/>
<polyline points="921.0,158.0 923.2,161.8 924.4,166.1 926.0,170.1 927.1,174.4 929.4,178.1 931.7,181.9 933.4,186.0 935.0,190.0 938.4,192.9 939.8,197.3 942.5,200.7 946.6,202.9 949.7,206.0 952.1,209.7 954.7,213.1 956.5,217.2 960.0,220.0" fill="none" stroke="#f1c9a3" stroke-width="1.2" stroke-linejoin="round"/>
<polyline points="1083.0,248.0 1086.5,250.3 1090.3,251.6 1094.8,251.5 1098.0,254.5 1101.8,255.8 1105.7,257.1 1109.2,259.3 1113.8,258.8 1117.5,260.5 1120.8,263.2 1124.5,265.0 1128.5,266.0 1132.6,266.7 1136.1,268.7 1140.0,270.0 1143.5,272.4 1147.9,273.0 1151.4,275.3 1155.2,277.0 1159.1,278.6 1162.5,281.2 1166.6,282.5 1170.3,284.5 1174.1,286.2 1177.3,289.1 1181.7,289.7 1184.8,292.9 1189.0,293.8 1193.0,295.3 1195.8,299.0 1200.0,300.0" fill="none" stroke="#f1c9a3" stroke-width="1.2" stroke-linejoin="round"/>
<polyline points="1117.0,513.0 1121.1,514.4 1124.1,517.7 1128.0,519.5 1131.8,521.5 1136.3,521.9 1139.8,524.5 1143.9,525.7 1146.9,529.3 1150.7,531.0 1154.7,532.5 1158.7,534.1 1162.6,535.8 1165.9,538.7 1170.0,540.0 1173.2,542.6 1176.1,545.5 1180.0,547.3 1183.0,550.1 1186.4,552.4 1188.6,556.2 1192.0,558.5 1195.8,560.5 1197.9,564.3 1201.9,565.9 1204.9,568.8 1208.4,571.0 1211.4,573.8 1213.7,577.4 1217.6,579.2 1221.0,581.5 1223.7,584.7 1227.1,587.1 1230.0,590.0" fill="none" stroke="#f1c9a3" stroke-width="1.2" stroke-linejoin="round"/>
<polyline points="1190.0,150.0 1194.2,149.3 1197.4,146.1 1201.9,146.4 1205.0,142.9 1209.6,143.1 1213.2,141.1 1216.7,138.6 1220.8,137.6 1224.4,135.7 1228.3,134.1 1232.1,132.5 1236.0,131.3 1240.0,130.0 1244.1,129.1 1247.8,127.3 1251.3,125.4 1254.1,121.9 1258.0,120.5 1262.2,119.9 1265.0,116.4 1269.3,115.9 1272.5,113.2 1276.8,112.8 1280.0,110.0 1282.7,106.6 1287.1,105.5 1289.8,102.2 1292.9,99.4 1296.0,96.6 1300.4,95.6 1303.4,92.5 1306.3,89.4 1309.9,87.4 1313.9,85.7 1316.3,82.0 1320.0,80.0 1323.6,77.9 1326.7,74.8 1330.3,72.6 1334.5,71.4 1338.0,69.0 1340.9,65.8 1344.3,63.3 1347.9,61.1 1352.0,59.7 1355.4,57.3 1359.0,55.0" fill="none" stroke="#f1c9a3" stroke-width="1.2" stroke-linejoin="round"/>
<polyline points="1320.0,80.0 1321.5,83.9 1322.6,87.8 1322.8,92.1 1323.6,96.1 1324.3,100.2 1325.8,104.0 1327.6,107.8 1328.9,111.8 1328.5,116.1 1330.0,120.0 1332.2,123.9 1333.6,128.2 1336.9,131.6 1337.4,136.3 1340.0,140.0" fill="none" stroke="#f1c9a3" stroke-width="1.2" stroke-linejoin="round"/>
<polyline points="760.0,85.0 764.0,85.1 767.9,86.7 771.9,87.3 776.0,87.0 780.1,86.4 783.9,88.9 788.0,88.4 791.9,89.8 796.1,89.0 800.0,90.0 803.3,92.4 805.2,96.2 808.8,98.4 812.0,100.9 814.5,104.1 817.0,107.3 820.0,110.0 824.6,110.4 828.6,112.9 832.9,114.2 837.1,115.7 841.7,116.4 845.6,119.0 850.0,120.0" fill="none" stroke="#f1c9a3" stroke-width="1.2" stroke-linejoin="round"/>
<polyline points="960.0,90.0 963.8,91.7 967.8,92.8 972.1,92.6 975.9,94.5 980.1,94.7 983.9,96.5 988.2,96.1 991.8,98.8 995.8,100.0 1000.0,100.0 1004.0,101.0 1008.0,102.0 1012.0,103.1 1016.0,104.1 1020.3,104.0 1023.8,107.0 1028.1,106.4 1032.2,107.3 1036.2,108.2 1040.0,110.0 1044.1,108.1 1048.8,107.8 1052.5,104.7 1056.9,103.4 1061.6,103.3 1065.5,100.8 1070.0,100.0" fill="none" stroke="#f1c9a3" stroke-width="1.2" stroke-linejoin="round"/>
<polyline points="1000.0,60.0 1003.6,62.1 1005.6,65.9 1008.5,68.7 1011.4,71.5 1014.0,74.6 1017.8,76.5 1020.0,80.0 1020.6,84.4 1022.2,88.5 1025.0,92.2 1026.1,96.4 1026.7,100.8 1028.0,105.0" fill="none" stroke="#f1c9a3" stroke-width="1.2" stroke-linejoin="round"/>
<polyline points="1420.0,660.0 1423.6,657.9 1426.9,655.3 1430.3,652.9 1434.2,651.3 1437.4,648.6 1441.5,647.3 1445.4,645.7 1448.2,642.2 1452.2,640.9 1456.0,639.0 1458.9,635.8 1463.2,634.9 1466.9,633.0 1470.0,630.0 1472.0,626.5 1474.3,623.2 1477.3,620.4 1478.9,616.7 1480.9,613.2 1484.1,610.5 1486.1,607.0 1487.5,603.1 1490.0,600.0" fill="none" stroke="#f1c9a3" stroke-width="1.2" stroke-linejoin="round"/>
<polyline points="860.0,640.0 863.3,642.5 866.0,645.5 868.7,648.5 870.7,652.2 873.8,654.8 876.5,657.8 880.0,660.0 881.6,663.8 883.8,667.3 887.5,669.8 888.9,673.8 890.3,677.8 892.5,681.2 896.0,683.8 897.9,687.5 900.0,691.0" fill="none" stroke="#f1c9a3" stroke-width="1.2" stroke-linejoin="round"/>
<polyline points="700.0,300.0 701.6,303.8 703.9,307.1 705.4,310.9 708.1,314.1 709.2,318.1 710.9,321.8 713.7,325.0 715.3,328.7 715.4,333.2 717.6,336.6 720.0,340.0 722.5,343.3 726.1,345.2 728.9,348.0 732.0,350.7 735.1,353.2 739.4,354.2 741.7,357.7 745.0,360.0" fill="none" stroke="#f1c9a3" stroke-width="1.2" stroke-linejoin="round"/>
<polyline points="1150.0,360.0 1152.5,363.8 1153.6,368.2 1156.4,371.8 1157.9,376.0 1160.0,380.0 1163.5,377.8 1165.9,374.5 1168.2,371.0 1171.5,368.6 1174.2,365.6 1177.8,363.6 1180.0,360.0 1184.0,357.1 1188.3,354.6 1192.9,352.8 1197.0,350.0" fill="none" stroke="#f1c9a3" stroke-width="1.2" stroke-linejoin="round"/>
<polyline points="944.0,290.0 945.3,285.9 948.2,282.6 950.9,279.2 952.0,275.0 953.6,271.0 955.9,267.5 958.1,263.8 960.0,260.0 962.6,256.9 965.7,254.4 968.9,251.9 972.2,249.6 975.5,247.3 978.5,244.6 981.5,242.1 985.0,240.0 989.0,238.3 993.4,238.4 997.6,238.2 1001.7,236.9 1005.9,236.0 1010.0,235.0" fill="none" stroke="#f1c9a3" stroke-width="1.2" stroke-linejoin="round"/>
<polyline points="890.0,330.0 894.1,328.3 897.7,325.4 902.2,324.4 906.0,321.9 910.0,320.0 913.4,317.9 916.8,315.8 920.0,313.3 923.1,310.8 926.4,308.4 929.7,306.2 933.3,304.5 936.5,302.0 940.0,300.0" fill="none" stroke="#f1c9a3" stroke-width="1.2" stroke-linejoin="round"/>
<polyline points="1331.0,50.0 1323.0,74.0 1319.0,102.0 1321.0,120.0 1327.0,142.0" fill="none" stroke="#a9c9ef" stroke-width="1.6"/>
<polyline points="1458.0,50.0 1439.0,94.0 1419.0,130.0 1427.0,142.0" fill="none" stroke="#a9c9ef" stroke-width="1.6"/>
<polyline points="1500.0,240.0 1510.0,220.0 1525.0,210.0" fill="none" stroke="#a9c9ef" stroke-width="1.6"/>
<polygon points="774.0,297.0 776.9,295.3 779.1,292.7 782.3,291.4 785.6,290.3 788.0,288.0 791.2,286.7 794.7,286.4 798.0,285.5 801.2,284.3 804.9,284.7 808.0,283.0 810.8,281.7 813.9,281.5 816.5,279.4 819.3,278.3 822.7,278.6 825.3,276.9 828.0,275.3 831.0,274.8 834.0,274.0 836.8,272.6 839.8,271.7 842.2,269.4 845.1,268.2 848.5,268.1 851.0,266.0 852.4,262.8 852.4,259.2 854.0,256.0 857.6,254.7 861.3,253.7 865.0,253.0 868.7,252.6 872.4,251.9 876.0,251.0 879.5,251.0 882.8,250.2 886.0,249.0 887.8,251.6 889.2,254.4 891.0,257.0 892.8,259.7 895.0,262.0 897.5,264.2 899.7,266.9 902.2,269.0 905.0,271.0 901.5,272.7 899.4,276.2 896.0,278.0 892.4,279.1 889.7,282.1 886.0,283.0 886.5,286.2 887.9,289.0 889.0,292.0 889.2,295.3 891.0,298.0 891.6,301.0 892.6,304.0 892.8,307.1 894.0,310.0 893.9,313.5 895.0,316.8 896.0,320.2 896.5,323.6 897.0,327.0 899.1,330.3 900.7,333.9 903.0,337.0 905.3,339.8 907.2,342.9 908.9,346.1 911.0,349.0 913.0,351.3 914.9,353.6 916.0,356.5 917.7,359.0 920.0,361.0 924.0,364.0 925.2,361.0 926.3,358.0 927.1,354.8 928.5,351.9 930.0,349.0 933.2,346.4 937.0,345.0 937.4,341.8 937.6,338.5 937.0,335.2 938.0,332.0 940.9,329.8 942.4,326.5 945.0,324.0 946.4,320.7 947.2,317.3 948.2,314.0 947.7,310.3 949.0,307.0 952.0,303.0 955.0,303.2 957.9,304.4 961.0,304.0 965.4,305.2 969.0,308.0 972.0,313.0 974.6,314.8 975.9,317.7 978.0,320.0 982.0,320.0 984.8,322.0 987.2,324.6 990.1,326.4 993.2,328.1 996.0,330.0 995.8,333.5 997.3,336.7 998.0,340.0 998.3,343.4 999.5,346.6 1000.0,350.0 1000.0,353.2 999.3,356.3 999.4,359.5 998.1,362.5 998.3,365.7 998.2,368.9 998.0,372.0 1000.2,374.4 1001.4,377.5 1003.0,380.3 1004.3,383.3 1006.0,386.0 1008.2,388.4 1010.2,391.2 1012.4,393.6 1015.4,395.3 1017.7,397.6 1020.0,400.0 1022.0,402.3 1023.7,405.0 1026.7,406.3 1028.6,408.7 1030.4,411.2 1033.0,413.0 1036.1,414.5 1038.8,416.7 1040.9,419.7 1043.9,421.5 1047.0,423.0 1043.5,425.5 1040.0,428.0 1036.7,429.0 1033.3,428.0 1030.0,428.7 1026.6,428.8 1023.2,428.8 1020.0,430.0 1020.0,433.5 1021.5,436.6 1022.0,440.0 1025.1,442.2 1027.6,445.1 1030.0,448.0 1032.3,450.0 1034.7,452.0 1037.4,453.6 1039.7,455.6 1041.5,458.2 1044.0,460.0 1046.3,462.1 1049.0,463.8 1050.6,466.7 1053.4,468.2 1056.0,470.0 1059.3,471.3 1061.7,473.9 1064.1,476.4 1067.4,477.7 1070.0,480.0 1072.3,482.3 1075.6,483.3 1077.7,485.7 1080.0,488.0 1080.0,491.1 1081.0,494.0 1081.5,497.1 1082.9,499.9 1083.0,503.0 1086.2,504.6 1089.4,506.3 1092.8,507.4 1095.7,509.6 1099.0,511.0 1102.0,511.4 1104.9,512.6 1108.0,512.1 1111.0,512.2 1114.1,512.0 1117.0,513.0 1120.3,513.3 1123.2,515.2 1126.6,514.9 1129.8,515.7 1132.9,516.7 1135.8,518.2 1139.0,519.0 1142.5,520.9 1146.3,521.9 1150.0,523.0 1152.5,524.8 1155.8,524.9 1158.5,526.1 1160.6,528.6 1163.7,529.1 1166.1,531.1 1169.0,532.0 1171.7,533.7 1174.4,535.4 1176.9,537.4 1179.6,539.1 1181.3,542.2 1184.1,543.7 1186.9,545.2 1189.4,547.3 1192.0,549.1 1194.9,550.6 1196.5,553.7 1199.4,555.2 1202.0,557.0 1203.9,559.6 1206.9,560.9 1209.1,563.2 1212.0,564.7 1214.6,566.4 1216.0,569.6 1218.5,571.5 1221.5,572.7 1223.3,575.6 1225.8,577.4 1228.8,578.7 1231.0,581.0 1233.1,583.4 1234.9,586.0 1237.7,587.7 1239.4,590.5 1242.5,591.8 1244.5,594.2 1246.3,596.9 1249.2,598.5 1251.3,600.8 1252.8,603.8 1255.6,605.5 1257.4,608.1 1260.0,610.0 1262.9,610.8 1265.7,612.0 1268.4,613.5 1271.0,615.0 1273.8,616.4 1275.3,619.4 1278.5,620.3 1280.6,622.5 1283.6,623.7 1285.5,626.2 1288.0,628.0 1291.0,628.5 1294.0,629.2 1297.0,630.0 1299.8,631.4 1302.0,633.5 1303.4,636.4 1306.0,638.0 1308.8,639.8 1311.6,641.6 1314.3,643.6 1316.9,645.7 1319.6,647.6 1322.0,650.0 1324.8,651.7 1326.1,654.8 1328.6,656.7 1331.0,658.7 1332.4,661.7 1335.4,663.2 1337.0,666.0 1339.3,668.8 1340.5,672.3 1343.0,675.0 1345.5,677.0 1347.1,679.7 1348.5,682.6 1350.6,685.0 1353.0,687.0 1356.0,691.0 1353.0,691.6 1350.0,691.3 1347.0,690.6 1344.0,691.2 1340.9,690.2 1337.9,691.5 1334.9,690.2 1331.9,691.0 1328.9,691.5 1325.9,691.1 1322.9,691.7 1319.9,690.6 1316.8,691.4 1313.8,690.3 1310.8,690.8 1307.8,691.2 1304.8,691.5 1301.8,690.8 1298.8,691.5 1295.8,690.3 1292.8,691.7 1289.7,691.0 1286.7,690.9 1283.7,691.4 1280.7,690.5 1277.7,691.2 1274.7,690.7 1271.7,690.9 1268.7,691.3 1265.6,691.2 1262.6,691.7 1259.6,691.6 1256.6,690.4 1253.6,691.3 1250.6,690.7 1247.6,691.7 1244.6,690.9 1241.6,691.2 1238.5,691.0 1235.5,691.4 1232.5,691.8 1229.5,691.3 1226.5,691.5 1223.5,691.7 1220.5,690.6 1217.5,691.4 1214.4,691.2 1211.4,690.3 1208.4,690.5 1205.4,690.3 1202.4,690.3 1199.4,691.7 1196.4,691.4 1193.4,691.8 1190.4,690.7 1187.3,690.7 1184.3,691.3 1181.3,691.2 1178.3,690.7 1175.3,690.6 1172.3,691.5 1169.3,690.4 1166.3,691.3 1163.2,690.8 1160.2,691.6 1157.2,691.7 1154.2,690.3 1151.2,690.6 1148.2,690.6 1145.2,691.8 1142.2,691.8 1139.2,691.6 1136.1,691.5 1133.1,691.4 1130.1,691.2 1127.1,691.8 1124.1,691.3 1121.1,690.8 1118.1,691.6 1115.1,690.4 1112.0,690.9 1109.0,690.6 1106.0,691.4 1103.0,691.1 1100.0,691.0 1099.0,688.0 1095.6,686.4 1091.9,685.8 1088.2,685.1 1085.0,683.0 1081.7,682.7 1078.5,683.0 1075.3,684.1 1072.0,684.0 1070.0,686.0 1067.0,687.0 1064.0,685.7 1061.0,686.3 1058.0,687.5 1055.0,687.3 1052.0,687.0 1048.6,687.5 1045.4,686.1 1042.0,687.0 1038.7,685.6 1035.4,685.7 1032.0,686.0 1028.7,686.1 1025.7,684.5 1022.4,684.4 1019.3,683.2 1016.0,683.0 1013.0,680.5 1009.1,679.3 1006.0,677.0 1002.4,676.4 999.6,673.6 996.0,673.0 992.9,671.5 990.4,669.0 987.0,668.0 986.0,664.9 984.7,661.8 983.0,659.0 980.4,656.0 977.0,654.0 974.4,652.3 971.5,651.1 968.4,650.2 966.0,648.0 964.3,645.0 961.9,642.6 960.0,639.7 958.0,637.0 955.8,634.4 952.3,633.5 950.0,631.0 948.1,628.4 944.9,627.1 943.5,624.0 941.0,622.0 939.9,619.0 937.4,616.8 936.3,613.9 935.3,610.8 933.2,608.4 931.5,605.8 929.4,603.3 927.5,600.8 926.4,597.8 925.0,595.0 923.6,592.1 922.1,589.2 921.0,586.1 919.5,583.2 919.2,579.9 918.0,576.9 916.0,574.2 914.8,571.2 914.0,568.0 913.0,565.1 911.9,562.2 911.7,559.0 909.7,556.4 908.7,553.5 908.7,550.2 906.4,547.7 906.1,544.5 904.7,541.7 904.5,538.5 903.1,535.8 902.4,532.7 900.4,530.1 900.0,527.0 899.3,523.8 898.2,520.7 896.9,517.6 896.5,514.4 895.6,511.2 893.3,508.5 892.6,505.2 892.0,502.0 889.1,501.0 886.3,500.0 883.4,499.0 880.8,497.4 878.0,496.2 875.7,494.2 872.7,493.3 870.0,492.0 867.1,490.9 864.8,488.9 862.5,486.9 859.9,485.4 857.2,484.0 854.6,482.4 852.0,480.8 850.5,477.7 847.8,476.3 845.0,475.0 841.9,474.0 839.9,471.3 837.5,469.3 834.4,468.2 831.3,467.3 829.0,465.0 826.3,463.4 823.4,462.1 821.0,459.9 817.9,459.1 816.1,456.0 813.0,455.0 811.0,452.2 808.8,449.5 807.1,446.5 804.5,444.2 801.8,441.9 800.0,439.0 798.3,436.3 796.9,433.5 795.5,430.7 795.5,427.3 794.3,424.4 792.2,421.9 790.7,419.1 790.0,416.0 789.2,413.1 788.6,410.1 787.7,407.2 785.4,404.9 785.5,401.7 784.0,399.0 784.5,395.9 784.2,392.7 783.3,389.6 782.9,386.5 784.0,383.4 782.9,380.3 782.9,377.1 783.0,374.0 784.1,371.0 784.8,367.9 786.0,365.0 789.1,364.8 791.9,363.0 794.8,361.9 798.0,362.0 799.3,359.2 800.5,356.4 802.0,353.7 803.0,350.8 804.5,348.1 805.0,345.0 802.6,342.7 799.4,341.8 796.6,340.2 793.5,339.1 791.0,337.0 790.4,333.6 790.7,330.2 789.6,326.8 790.5,323.4 790.0,320.0 786.3,319.6 783.0,318.0 780.6,315.7 778.9,312.7 776.0,311.0 774.8,307.6 774.2,304.1 774.4,300.5 774.0,297.0" fill="#bcd6f0" stroke="#b0cdec" stroke-width="1"/>
<polygon points="774.0,297.0 776.9,295.3 779.1,292.7 782.3,291.4 785.6,290.3 788.0,288.0 791.2,286.7 794.7,286.4 798.0,285.5 801.2,284.3 804.9,284.7 808.0,283.0 810.8,281.7 813.9,281.5 816.5,279.4 819.3,278.3 822.7,278.6 825.3,276.9 828.0,275.3 831.0,274.8 834.0,274.0 836.8,272.6 839.8,271.7 842.2,269.4 845.1,268.2 848.5,268.1 851.0,266.0 852.4,262.8 852.4,259.2 854.0,256.0 857.6,254.7 861.3,253.7 865.0,253.0 868.7,252.6 872.4,251.9 876.0,251.0 879.5,251.0 882.8,250.2 886.0,249.0 887.8,251.6 889.2,254.4 891.0,257.0 892.8,259.7 895.0,262.0 897.5,264.2 899.7,266.9 902.2,269.0 905.0,271.0 901.5,272.7 899.4,276.2 896.0,278.0 892.4,279.1 889.7,282.1 886.0,283.0 886.5,286.2 887.9,289.0 889.0,292.0 889.2,295.3 891.0,298.0 891.6,301.0 892.6,304.0 892.8,307.1 894.0,310.0 893.9,313.5 895.0,316.8 896.0,320.2 896.5,323.6 897.0,327.0 899.1,330.3 900.7,333.9 903.0,337.0 905.3,339.8 907.2,342.9 908.9,346.1 911.0,349.0 913.0,351.3 914.9,353.6 916.0,356.5 917.7,359.0 920.0,361.0 924.0,364.0 925.2,361.0 926.3,358.0 927.1,354.8 928.5,351.9 930.0,349.0 933.2,346.4 937.0,345.0 937.4,341.8 937.6,338.5 937.0,335.2 938.0,332.0 940.9,329.8 942.4,326.5 945.0,324.0 946.4,320.7 947.2,317.3 948.2,314.0 947.7,310.3 949.0,307.0 952.0,303.0 955.0,303.2 957.9,304.4 961.0,304.0 965.4,305.2 969.0,308.0 972.0,313.0 974.6,314.8 975.9,317.7 978.0,320.0 982.0,320.0 984.8,322.0 987.2,324.6 990.1,326.4 993.2,328.1 996.0,330.0 995.8,333.5 997.3,336.7 998.0,340.0 998.3,343.4 999.5,346.6 1000.0,350.0 1000.0,353.2 999.3,356.3 999.4,359.5 998.1,362.5 998.3,365.7 998.2,368.9 998.0,372.0 1000.2,374.4 1001.4,377.5 1003.0,380.3 1004.3,383.3 1006.0,386.0 1008.2,388.4 1010.2,391.2 1012.4,393.6 1015.4,395.3 1017.7,397.6 1020.0,400.0 1022.0,402.3 1023.7,405.0 1026.7,406.3 1028.6,408.7 1030.4,411.2 1033.0,413.0 1036.1,414.5 1038.8,416.7 1040.9,419.7 1043.9,421.5 1047.0,423.0 1043.5,425.5 1040.0,428.0 1036.7,429.0 1033.3,428.0 1030.0,428.7 1026.6,428.8 1023.2,428.8 1020.0,430.0 1020.0,433.5 1021.5,436.6 1022.0,440.0 1025.1,442.2 1027.6,445.1 1030.0,448.0 1032.3,450.0 1034.7,452.0 1037.4,453.6 1039.7,455.6 1041.5,458.2 1044.0,460.0 1046.3,462.1 1049.0,463.8 1050.6,466.7 1053.4,468.2 1056.0,470.0 1059.3,471.3 1061.7,473.9 1064.1,476.4 1067.4,477.7 1070.0,480.0 1072.3,482.3 1075.6,483.3 1077.7,485.7 1080.0,488.0 1080.0,491.1 1081.0,494.0 1081.5,497.1 1082.9,499.9 1083.0,503.0 1086.2,504.6 1089.4,506.3 1092.8,507.4 1095.7,509.6 1099.0,511.0 1102.0,511.4 1104.9,512.6 1108.0,512.1 1111.0,512.2 1114.1,512.0 1117.0,513.0 1120.3,513.3 1123.2,515.2 1126.6,514.9 1129.8,515.7 1132.9,516.7 1135.8,518.2 1139.0,519.0 1142.5,520.9 1146.3,521.9 1150.0,523.0 1152.5,524.8 1155.8,524.9 1158.5,526.1 1160.6,528.6 1163.7,529.1 1166.1,531.1 1169.0,532.0 1171.7,533.7 1174.4,535.4 1176.9,537.4 1179.6,539.1 1181.3,542.2 1184.1,543.7 1186.9,545.2 1189.4,547.3 1192.0,549.1 1194.9,550.6 1196.5,553.7 1199.4,555.2 1202.0,557.0 1203.9,559.6 1206.9,560.9 1209.1,563.2 1212.0,564.7 1214.6,566.4 1216.0,569.6 1218.5,571.5 1221.5,572.7 1223.3,575.6 1225.8,577.4 1228.8,578.7 1231.0,581.0 1233.1,583.4 1234.9,586.0 1237.7,587.7 1239.4,590.5 1242.5,591.8 1244.5,594.2 1246.3,596.9 1249.2,598.5 1251.3,600.8 1252.8,603.8 1255.6,605.5 1257.4,608.1 1260.0,610.0 1262.9,610.8 1265.7,612.0 1268.4,613.5 1271.0,615.0 1273.8,616.4 1275.3,619.4 1278.5,620.3 1280.6,622.5 1283.6,623.7 1285.5,626.2 1288.0,628.0 1291.0,628.5 1294.0,629.2 1297.0,630.0 1299.8,631.4 1302.0,633.5 1303.4,636.4 1306.0,638.0 1308.8,639.8 1311.6,641.6 1314.3,643.6 1316.9,645.7 1319.6,647.6 1322.0,650.0 1324.8,651.7 1326.1,654.8 1328.6,656.7 1331.0,658.7 1332.4,661.7 1335.4,663.2 1337.0,666.0 1339.3,668.8 1340.5,672.3 1343.0,675.0 1345.5,677.0 1347.1,679.7 1348.5,682.6 1350.6,685.0 1353.0,687.0 1356.0,691.0 1353.0,691.6 1350.0,691.3 1347.0,690.6 1344.0,691.2 1340.9,690.2 1337.9,691.5 1334.9,690.2 1331.9,691.0 1328.9,691.5 1325.9,691.1 1322.9,691.7 1319.9,690.6 1316.8,691.4 1313.8,690.3 1310.8,690.8 1307.8,691.2 1304.8,691.5 1301.8,690.8 1298.8,691.5 1295.8,690.3 1292.8,691.7 1289.7,691.0 1286.7,690.9 1283.7,691.4 1280.7,690.5 1277.7,691.2 1274.7,690.7 1271.7,690.9 1268.7,691.3 1265.6,691.2 1262.6,691.7 1259.6,691.6 1256.6,690.4 1253.6,691.3 1250.6,690.7 1247.6,691.7 1244.6,690.9 1241.6,691.2 1238.5,691.0 1235.5,691.4 1232.5,691.8 1229.5,691.3 1226.5,691.5 1223.5,691.7 1220.5,690.6 1217.5,691.4 1214.4,691.2 1211.4,690.3 1208.4,690.5 1205.4,690.3 1202.4,690.3 1199.4,691.7 1196.4,691.4 1193.4,691.8 1190.4,690.7 1187.3,690.7 1184.3,691.3 1181.3,691.2 1178.3,690.7 1175.3,690.6 1172.3,691.5 1169.3,690.4 1166.3,691.3 1163.2,690.8 1160.2,691.6 1157.2,691.7 1154.2,690.3 1151.2,690.6 1148.2,690.6 1145.2,691.8 1142.2,691.8 1139.2,691.6 1136.1,691.5 1133.1,691.4 1130.1,691.2 1127.1,691.8 1124.1,691.3 1121.1,690.8 1118.1,691.6 1115.1,690.4 1112.0,690.9 1109.0,690.6 1106.0,691.4 1103.0,691.1 1100.0,691.0 1099.0,688.0 1095.6,686.4 1091.9,685.8 1088.2,685.1 1085.0,683.0 1081.7,682.7 1078.5,683.0 1075.3,684.1 1072.0,684.0 1070.0,686.0 1067.0,687.0 1064.0,685.7 1061.0,686.3 1058.0,687.5 1055.0,687.3 1052.0,687.0 1048.6,687.5 1045.4,686.1 1042.0,687.0 1038.7,685.6 1035.4,685.7 1032.0,686.0 1028.7,686.1 1025.7,684.5 1022.4,684.4 1019.3,683.2 1016.0,683.0 1013.0,680.5 1009.1,679.3 1006.0,677.0 1002.4,676.4 999.6,673.6 996.0,673.0 992.9,671.5 990.4,669.0 987.0,668.0 986.0,664.9 984.7,661.8 983.0,659.0 980.4,656.0 977.0,654.0 974.4,652.3 971.5,651.1 968.4,650.2 966.0,648.0 964.3,645.0 961.9,642.6 960.0,639.7 958.0,637.0 955.8,634.4 952.3,633.5 950.0,631.0 948.1,628.4 944.9,627.1 943.5,624.0 941.0,622.0 939.9,619.0 937.4,616.8 936.3,613.9 935.3,610.8 933.2,608.4 931.5,605.8 929.4,603.3 927.5,600.8 926.4,597.8 925.0,595.0 923.6,592.1 922.1,589.2 921.0,586.1 919.5,583.2 919.2,579.9 918.0,576.9 916.0,574.2 914.8,571.2 914.0,568.0 913.0,565.1 911.9,562.2 911.7,559.0 909.7,556.4 908.7,553.5 908.7,550.2 906.4,547.7 906.1,544.5 904.7,541.7 904.5,538.5 903.1,535.8 902.4,532.7 900.4,530.1 900.0,527.0 899.3,523.8 898.2,520.7 896.9,517.6 896.5,514.4 895.6,511.2 893.3,508.5 892.6,505.2 892.0,502.0 889.1,501.0 886.3,500.0 883.4,499.0 880.8,497.4 878.0,496.2 875.7,494.2 872.7,493.3 870.0,492.0 867.1,490.9 864.8,488.9 862.5,486.9 859.9,485.4 857.2,484.0 854.6,482.4 852.0,480.8 850.5,477.7 847.8,476.3 845.0,475.0 841.9,474.0 839.9,471.3 837.5,469.3 834.4,468.2 831.3,467.3 829.0,465.0 826.3,463.4 823.4,462.1 821.0,459.9 817.9,459.1 816.1,456.0 813.0,455.0 811.0,452.2 808.8,449.5 807.1,446.5 804.5,444.2 801.8,441.9 800.0,439.0 798.3,436.3 796.9,433.5 795.5,430.7 795.5,427.3 794.3,424.4 792.2,421.9 790.7,419.1 790.0,416.0 789.2,413.1 788.6,410.1 787.7,407.2 785.4,404.9 785.5,401.7 784.0,399.0 784.5,395.9 784.2,392.7 783.3,389.6 782.9,386.5 784.0,383.4 782.9,380.3 782.9,377.1 783.0,374.0 784.1,371.0 784.8,367.9 786.0,365.0 789.1,364.8 791.9,363.0 794.8,361.9 798.0,362.0 799.3,359.2 800.5,356.4 802.0,353.7 803.0,350.8 804.5,348.1 805.0,345.0 802.6,342.7 799.4,341.8 796.6,340.2 793.5,339.1 791.0,337.0 790.4,333.6 790.7,330.2 789.6,326.8 790.5,323.4 790.0,320.0 786.3,319.6 783.0,318.0 780.6,315.7 778.9,312.7 776.0,311.0 774.8,307.6 774.2,304.1 774.4,300.5 774.0,297.0" fill="url(#wv)"/>
<polygon points="366.0,493.0 368.8,491.0 372.0,490.0 373.7,492.6 376.7,494.1 378.0,497.0 381.0,497.6 384.0,497.6 387.0,497.5 390.0,496.9 393.1,496.6 396.1,497.3 399.1,497.0 402.1,496.9 405.1,496.7 408.1,496.9 411.1,497.3 414.1,497.6 417.2,497.7 420.2,496.4 423.2,496.6 426.2,496.9 429.2,497.1 432.2,496.7 435.2,496.5 438.2,496.3 441.3,496.7 444.3,496.9 447.3,497.8 450.3,497.7 453.3,497.7 456.3,497.9 459.3,497.8 462.3,497.2 465.3,497.6 468.4,496.2 471.4,497.3 474.4,497.2 477.4,496.6 480.4,497.1 483.4,497.8 486.4,497.0 489.4,497.3 492.5,496.6 495.5,496.7 498.5,497.7 501.5,496.2 504.5,496.4 507.5,497.3 510.5,496.9 513.5,496.3 516.6,497.3 519.6,496.8 522.6,497.1 525.6,496.8 528.6,497.1 531.6,497.1 534.6,496.8 537.6,496.3 540.7,496.4 543.7,497.7 546.7,497.1 549.7,496.3 552.7,497.7 555.7,496.6 558.7,496.3 561.7,497.1 564.7,496.6 567.8,497.0 570.8,497.1 573.8,496.5 576.8,497.1 579.8,496.3 582.8,497.0 585.8,497.2 588.8,496.2 591.9,496.8 594.9,496.2 597.9,496.9 600.9,497.7 603.9,497.1 606.9,497.4 609.9,497.5 612.9,496.3 616.0,497.9 619.0,497.4 622.0,496.3 625.0,497.6 628.0,497.0 629.8,499.8 631.8,502.5 632.2,506.0 634.4,508.6 635.7,511.6 638.3,513.9 638.9,517.4 641.0,520.0 642.4,522.9 642.8,526.1 643.2,529.3 644.5,532.3 644.2,535.6 645.5,538.6 646.0,541.7 646.0,545.0 647.0,548.0 646.7,551.2 645.4,554.2 645.5,557.4 644.6,560.5 644.7,563.7 643.7,566.8 644.0,570.0 647.0,571.6 650.5,571.4 653.4,573.4 656.8,573.7 659.7,575.5 663.0,576.0 664.2,579.4 665.5,582.7 668.1,585.5 669.0,589.0 671.2,591.1 672.7,593.8 674.4,596.4 676.7,598.4 679.6,599.8 680.9,602.8 683.5,604.4 684.9,607.2 686.6,609.8 689.5,611.3 691.0,614.0 692.4,616.9 694.8,619.0 697.3,620.9 699.4,623.2 701.0,626.0 704.0,627.3 706.7,629.4 709.9,630.4 713.3,631.1 716.4,632.4 719.3,633.9 722.0,636.0 724.0,638.4 727.1,639.6 729.0,642.1 731.7,643.7 733.6,646.3 736.3,647.8 739.0,649.5 740.5,652.5 743.2,654.1 745.4,656.3 748.0,658.0 749.8,660.6 751.8,662.9 755.2,663.9 756.9,666.5 759.4,668.5 761.1,671.1 762.8,673.7 765.1,675.8 768.2,677.0 770.2,679.4 772.0,682.0 773.9,685.4 776.4,688.2 779.0,691.0 776.0,691.2 773.0,691.0 770.0,691.6 766.9,690.4 763.9,691.2 760.9,690.3 757.9,690.8 754.9,691.8 751.9,691.3 748.9,691.5 745.8,690.3 742.8,690.8 739.8,691.8 736.8,691.6 733.8,691.3 730.8,691.1 727.8,690.9 724.7,691.2 721.7,691.3 718.7,691.9 715.7,690.9 712.7,691.3 709.7,691.9 706.6,691.1 703.6,690.1 700.6,691.8 697.6,691.6 694.6,690.7 691.6,691.4 688.6,691.4 685.5,691.0 682.5,691.4 679.5,690.9 676.5,690.9 673.5,690.2 670.5,690.1 667.5,691.8 664.4,690.9 661.4,690.5 658.4,690.3 655.4,690.5 652.4,690.8 649.4,690.8 646.4,691.2 643.3,691.4 640.3,690.5 637.3,690.3 634.3,690.2 631.3,690.7 628.3,691.4 625.3,690.5 622.2,690.6 619.2,691.0 616.2,690.8 613.2,691.3 610.2,690.9 607.2,691.2 604.2,691.8 601.1,691.3 598.1,691.3 595.1,690.1 592.1,691.0 589.1,691.2 586.1,691.5 583.1,691.5 580.0,691.3 577.0,691.7 574.0,691.9 571.0,690.3 568.0,691.1 565.0,691.1 561.9,690.9 558.9,691.4 555.9,691.6 552.9,691.8 549.9,691.4 546.9,691.3 543.9,690.6 540.8,690.9 537.8,690.2 534.8,691.3 531.8,690.2 528.8,690.8 525.8,691.8 522.8,691.6 519.7,690.9 516.7,690.1 513.7,691.3 510.7,690.5 507.7,691.1 504.7,690.3 501.7,691.8 498.6,691.0 495.6,690.3 492.6,691.4 489.6,691.4 486.6,691.9 483.6,691.6 480.6,691.4 477.5,690.6 474.5,691.5 471.5,691.2 468.5,691.5 465.5,690.8 462.5,690.3 459.5,690.7 456.4,691.5 453.4,690.6 450.4,690.2 447.4,690.8 444.4,691.8 441.4,690.4 438.4,690.3 435.3,691.3 432.3,691.7 429.3,691.6 426.3,690.9 423.3,690.3 420.3,690.7 417.2,690.2 414.2,691.5 411.2,691.3 408.2,690.6 405.2,690.7 402.2,691.2 399.2,690.7 396.1,691.3 393.1,691.8 390.1,691.2 387.1,691.8 384.1,690.8 381.1,691.3 378.1,691.0 375.0,690.8 372.0,691.4 369.0,691.1 366.0,691.0 365.1,688.0 366.8,685.0 366.1,682.0 366.9,679.0 365.2,676.0 366.2,673.0 366.4,670.0 365.7,667.0 365.3,664.0 365.4,661.0 365.4,658.0 366.5,655.0 365.3,652.0 366.6,649.0 365.9,646.0 366.1,643.0 366.2,640.0 366.1,637.0 366.3,634.0 366.2,631.0 365.7,628.0 366.4,625.0 365.6,622.0 366.4,619.0 366.5,616.0 366.5,613.0 365.7,610.0 366.5,607.0 366.9,604.0 365.9,601.0 365.6,598.0 366.0,595.0 366.8,592.0 365.3,589.0 365.1,586.0 366.0,583.0 366.3,580.0 366.5,577.0 365.8,574.0 366.9,571.0 365.5,568.0 366.5,565.0 365.3,562.0 365.2,559.0 365.3,556.0 365.2,553.0 366.0,550.0 366.1,547.0 365.4,544.0 366.8,541.0 365.8,538.0 365.4,535.0 365.4,532.0 366.4,529.0 366.8,526.0 365.4,523.0 365.2,520.0 366.5,517.0 365.5,514.0 366.9,511.0 366.0,508.0 366.2,505.0 365.7,502.0 366.5,499.0 365.9,496.0 366.0,493.0" fill="#bcd6f0" stroke="#b0cdec" stroke-width="1"/>
<polygon points="366.0,493.0 368.8,491.0 372.0,490.0 373.7,492.6 376.7,494.1 378.0,497.0 381.0,497.6 384.0,497.6 387.0,497.5 390.0,496.9 393.1,496.6 396.1,497.3 399.1,497.0 402.1,496.9 405.1,496.7 408.1,496.9 411.1,497.3 414.1,497.6 417.2,497.7 420.2,496.4 423.2,496.6 426.2,496.9 429.2,497.1 432.2,496.7 435.2,496.5 438.2,496.3 441.3,496.7 444.3,496.9 447.3,497.8 450.3,497.7 453.3,497.7 456.3,497.9 459.3,497.8 462.3,497.2 465.3,497.6 468.4,496.2 471.4,497.3 474.4,497.2 477.4,496.6 480.4,497.1 483.4,497.8 486.4,497.0 489.4,497.3 492.5,496.6 495.5,496.7 498.5,497.7 501.5,496.2 504.5,496.4 507.5,497.3 510.5,496.9 513.5,496.3 516.6,497.3 519.6,496.8 522.6,497.1 525.6,496.8 528.6,497.1 531.6,497.1 534.6,496.8 537.6,496.3 540.7,496.4 543.7,497.7 546.7,497.1 549.7,496.3 552.7,497.7 555.7,496.6 558.7,496.3 561.7,497.1 564.7,496.6 567.8,497.0 570.8,497.1 573.8,496.5 576.8,497.1 579.8,496.3 582.8,497.0 585.8,497.2 588.8,496.2 591.9,496.8 594.9,496.2 597.9,496.9 600.9,497.7 603.9,497.1 606.9,497.4 609.9,497.5 612.9,496.3 616.0,497.9 619.0,497.4 622.0,496.3 625.0,497.6 628.0,497.0 629.8,499.8 631.8,502.5 632.2,506.0 634.4,508.6 635.7,511.6 638.3,513.9 638.9,517.4 641.0,520.0 642.4,522.9 642.8,526.1 643.2,529.3 644.5,532.3 644.2,535.6 645.5,538.6 646.0,541.7 646.0,545.0 647.0,548.0 646.7,551.2 645.4,554.2 645.5,557.4 644.6,560.5 644.7,563.7 643.7,566.8 644.0,570.0 647.0,571.6 650.5,571.4 653.4,573.4 656.8,573.7 659.7,575.5 663.0,576.0 664.2,579.4 665.5,582.7 668.1,585.5 669.0,589.0 671.2,591.1 672.7,593.8 674.4,596.4 676.7,598.4 679.6,599.8 680.9,602.8 683.5,604.4 684.9,607.2 686.6,609.8 689.5,611.3 691.0,614.0 692.4,616.9 694.8,619.0 697.3,620.9 699.4,623.2 701.0,626.0 704.0,627.3 706.7,629.4 709.9,630.4 713.3,631.1 716.4,632.4 719.3,633.9 722.0,636.0 724.0,638.4 727.1,639.6 729.0,642.1 731.7,643.7 733.6,646.3 736.3,647.8 739.0,649.5 740.5,652.5 743.2,654.1 745.4,656.3 748.0,658.0 749.8,660.6 751.8,662.9 755.2,663.9 756.9,666.5 759.4,668.5 761.1,671.1 762.8,673.7 765.1,675.8 768.2,677.0 770.2,679.4 772.0,682.0 773.9,685.4 776.4,688.2 779.0,691.0 776.0,691.2 773.0,691.0 770.0,691.6 766.9,690.4 763.9,691.2 760.9,690.3 757.9,690.8 754.9,691.8 751.9,691.3 748.9,691.5 745.8,690.3 742.8,690.8 739.8,691.8 736.8,691.6 733.8,691.3 730.8,691.1 727.8,690.9 724.7,691.2 721.7,691.3 718.7,691.9 715.7,690.9 712.7,691.3 709.7,691.9 706.6,691.1 703.6,690.1 700.6,691.8 697.6,691.6 694.6,690.7 691.6,691.4 688.6,691.4 685.5,691.0 682.5,691.4 679.5,690.9 676.5,690.9 673.5,690.2 670.5,690.1 667.5,691.8 664.4,690.9 661.4,690.5 658.4,690.3 655.4,690.5 652.4,690.8 649.4,690.8 646.4,691.2 643.3,691.4 640.3,690.5 637.3,690.3 634.3,690.2 631.3,690.7 628.3,691.4 625.3,690.5 622.2,690.6 619.2,691.0 616.2,690.8 613.2,691.3 610.2,690.9 607.2,691.2 604.2,691.8 601.1,691.3 598.1,691.3 595.1,690.1 592.1,691.0 589.1,691.2 586.1,691.5 583.1,691.5 580.0,691.3 577.0,691.7 574.0,691.9 571.0,690.3 568.0,691.1 565.0,691.1 561.9,690.9 558.9,691.4 555.9,691.6 552.9,691.8 549.9,691.4 546.9,691.3 543.9,690.6 540.8,690.9 537.8,690.2 534.8,691.3 531.8,690.2 528.8,690.8 525.8,691.8 522.8,691.6 519.7,690.9 516.7,690.1 513.7,691.3 510.7,690.5 507.7,691.1 504.7,690.3 501.7,691.8 498.6,691.0 495.6,690.3 492.6,691.4 489.6,691.4 486.6,691.9 483.6,691.6 480.6,691.4 477.5,690.6 474.5,691.5 471.5,691.2 468.5,691.5 465.5,690.8 462.5,690.3 459.5,690.7 456.4,691.5 453.4,690.6 450.4,690.2 447.4,690.8 444.4,691.8 441.4,690.4 438.4,690.3 435.3,691.3 432.3,691.7 429.3,691.6 426.3,690.9 423.3,690.3 420.3,690.7 417.2,690.2 414.2,691.5 411.2,691.3 408.2,690.6 405.2,690.7 402.2,691.2 399.2,690.7 396.1,691.3 393.1,691.8 390.1,691.2 387.1,691.8 384.1,690.8 381.1,691.3 378.1,691.0 375.0,690.8 372.0,691.4 369.0,691.1 366.0,691.0 365.1,688.0 366.8,685.0 366.1,682.0 366.9,679.0 365.2,676.0 366.2,673.0 366.4,670.0 365.7,667.0 365.3,664.0 365.4,661.0 365.4,658.0 366.5,655.0 365.3,652.0 366.6,649.0 365.9,646.0 366.1,643.0 366.2,640.0 366.1,637.0 366.3,634.0 366.2,631.0 365.7,628.0 366.4,625.0 365.6,622.0 366.4,619.0 366.5,616.0 366.5,613.0 365.7,610.0 366.5,607.0 366.9,604.0 365.9,601.0 365.6,598.0 366.0,595.0 366.8,592.0 365.3,589.0 365.1,586.0 366.0,583.0 366.3,580.0 366.5,577.0 365.8,574.0 366.9,571.0 365.5,568.0 366.5,565.0 365.3,562.0 365.2,559.0 365.3,556.0 365.2,553.0 366.0,550.0 366.1,547.0 365.4,544.0 366.8,541.0 365.8,538.0 365.4,535.0 365.4,532.0 366.4,529.0 366.8,526.0 365.4,523.0 365.2,520.0 366.5,517.0 365.5,514.0 366.9,511.0 366.0,508.0 366.2,505.0 365.7,502.0 366.5,499.0 365.9,496.0 366.0,493.0" fill="url(#wv)"/>
<polygon points="1176.0,148.0 1180.0,147.0 1183.0,156.0 1179.0,158.0" fill="#b5d0f0"/>
<polygon points="1134.0,188.0 1141.0,186.0 1146.0,188.0 1140.0,191.0 1135.0,191.0" fill="#b5d0f0"/>
<polygon points="1412.0,646.0 1422.0,650.0 1436.0,656.0 1442.0,664.0 1434.0,662.0 1420.0,656.0" fill="#b5d0f0"/>
<polygon points="366.0,96.0 372.0,95.0 377.0,98.0 376.0,104.0 368.0,103.0" fill="#b5d0f0"/>
<polygon points="366.0,114.0 373.0,115.0 372.0,121.0 366.0,120.0" fill="#b5d0f0"/>
<polygon points="450.0,89.0 456.0,89.0 455.0,92.0 450.0,92.0" fill="#b5d0f0"/>
<polygon points="478.0,87.0 490.0,86.0 495.0,90.0 480.0,92.0" fill="#b5d0f0"/>
<polygon points="1188.0,141.0 1210.0,131.0 1240.0,117.0 1262.0,105.0 1265.0,110.0 1245.0,123.0 1215.0,138.0 1192.0,147.0" fill="#b5d0f0"/>
<polygon points="1293.0,82.0 1300.0,80.0 1301.0,86.0 1294.0,88.0" fill="#b5d0f0"/>
<polygon points="1336.0,641.0 1345.0,645.0 1360.0,652.0 1367.0,664.0 1358.0,665.0 1345.0,655.0 1338.0,648.0" fill="#b5d0f0"/>
<polygon points="666.0,243.0 673.0,240.0 671.0,255.0 667.0,260.0" fill="#b5d0f0"/>
<polygon points="771.0,379.0 785.0,380.0 786.0,391.0 773.0,393.0" fill="#b5d0f0"/>
<polygon points="1297.0,620.0 1305.0,619.0 1311.0,624.0 1309.0,631.0 1300.0,630.0" fill="#b5d0f0"/>
<polygon points="1279.0,581.0 1286.0,580.0 1287.0,590.0 1280.0,590.0" fill="#b5d0f0"/>
<ellipse cx="768" cy="550" rx="10" ry="6" fill="#b5d0f0"/>
<ellipse cx="759" cy="610" rx="7" ry="6" fill="#b5d0f0"/>
<ellipse cx="782" cy="662" rx="6" ry="4" fill="#b5d0f0"/>
<ellipse cx="1125" cy="468" rx="2" ry="6" fill="#b5d0f0"/>
<polyline points="905.0,270.0 881.0,278.0 861.0,288.0 837.0,300.0 831.0,314.0 831.0,343.0 820.0,375.0 812.0,390.0 811.0,404.0 819.0,424.0 845.0,449.0 876.0,469.0 901.0,483.0 917.0,500.0 927.0,540.0 941.0,576.0 954.0,603.0 981.0,632.0 1011.0,648.0 1035.0,640.0 1062.0,630.0 1084.0,638.0 1100.0,651.0" fill="none" stroke="#93b6d6" stroke-width="1.2"/>
<polyline points="864.0,288.0 869.0,314.0 878.0,346.0 887.0,367.0 916.0,395.0 944.0,415.0 972.0,444.0 1000.0,478.0 1019.0,500.0 1049.0,522.0 1073.0,532.0 1079.0,540.0 1054.0,538.0 1035.0,535.0 1022.0,546.0 1022.0,562.0 1035.0,581.0 1065.0,589.0 1080.0,592.0 1104.0,586.0 1107.0,608.0 1115.0,613.0 1134.0,613.0 1166.0,619.0 1202.0,616.0 1242.0,627.0 1283.0,649.0 1315.0,673.0 1323.0,691.0" fill="none" stroke="#93b6d6" stroke-width="1.2"/>
<polyline points="1107.0,613.0 1088.0,627.0 1085.0,646.0 1096.0,657.0 1115.0,657.0 1134.0,643.0 1137.0,624.0 1126.0,613.0" fill="none" stroke="#93b6d6" stroke-width="1.2"/>
<polyline points="1080.0,635.0 1088.0,662.0 1102.0,673.0 1120.0,691.0" fill="none" stroke="#93b6d6" stroke-width="1.2"/>
<polyline points="1291.0,632.0 1283.0,651.0" fill="none" stroke="#93b6d6" stroke-width="1.2"/>
<polyline points="366.0,534.0 396.0,510.0 411.0,498.0" fill="none" stroke="#93b6d6" stroke-width="1.2"/>
<polyline points="569.0,498.0 572.0,522.0 569.0,546.0 575.0,564.0 581.0,581.0 587.0,605.0 588.0,647.0 581.0,671.0 575.0,691.0" fill="none" stroke="#93b6d6" stroke-width="1.2"/>
<polyline points="527.0,555.0 539.0,543.0 557.0,541.0 569.0,546.0" fill="none" stroke="#93b6d6" stroke-width="1.2"/>
<polyline points="527.0,555.0 506.0,575.0 479.0,593.0 467.0,617.0 464.0,647.0 464.0,691.0" fill="none" stroke="#93b6d6" stroke-width="1.2"/>
<polyline points="588.0,654.0 607.0,658.0 654.0,664.0 701.0,676.0 735.0,691.0" fill="none" stroke="#93b6d6" stroke-width="1.2"/>
<polygon points="549.0,569.0 552.4,567.2 556.0,566.0 555.8,569.6 557.7,572.9 557.1,576.6 558.0,580.0 559.0,583.1 558.2,586.3 558.9,589.4 558.3,592.6 560.0,595.6 559.4,598.8 559.9,601.9 560.0,605.0 559.6,608.4 559.9,611.7 560.8,615.0 561.8,618.3 562.1,621.6 562.0,625.0 562.7,628.1 562.7,631.3 563.3,634.4 563.7,637.5 563.0,640.8 563.5,643.9 564.0,647.0 563.8,650.3 562.0,653.4 562.8,656.9 561.6,660.1 561.8,663.5 559.9,666.6 560.0,670.0 558.5,672.8 558.7,676.1 557.0,678.9 556.0,681.8 556.1,685.1 555.1,688.1 554.0,691.0 551.0,691.0 548.0,690.3 545.0,691.6 542.0,690.7 539.0,690.8 536.0,691.1 533.0,690.9 530.0,690.3 527.0,691.5 524.0,690.3 521.0,691.3 518.0,690.5 515.0,690.3 512.0,691.6 509.0,690.3 506.0,690.1 503.0,691.4 500.0,691.9 497.0,691.7 494.0,690.1 491.0,691.9 488.0,690.3 485.0,691.0 485.0,687.7 486.6,684.7 486.1,681.3 486.8,678.1 488.0,675.0 488.9,671.9 488.5,668.5 489.5,665.3 491.1,662.3 491.0,659.0 489.8,656.1 488.6,653.2 487.3,650.3 485.0,648.0 484.2,644.8 484.5,641.5 485.5,638.2 485.0,635.0 487.0,632.7 487.6,629.5 490.0,627.5 491.3,624.7 493.2,622.4 495.0,620.0 496.7,617.1 498.8,614.6 502.3,613.4 503.6,610.2 506.0,608.0 509.1,607.0 511.3,604.2 514.4,603.2 516.9,601.0 520.0,600.0 523.2,599.1 526.3,597.8 529.7,597.9 532.6,596.2 536.0,596.0 539.1,595.7 542.0,594.5 544.8,593.1 548.0,593.0 548.0,589.7 548.5,586.5 549.5,583.3 549.0,580.0 548.7,576.3 548.5,572.7 549.0,569.0" fill="#f6f3ef"/>
<polygon points="612.0,590.0 614.3,588.9 616.3,587.4 618.2,585.7 620.0,584.0 623.0,583.2 625.9,582.6 629.0,582.2 632.0,582.0 635.2,583.0 638.0,585.0 637.5,587.5 636.0,589.7 635.0,592.0 632.7,593.4 630.3,594.6 628.0,596.0 625.4,596.2 622.8,596.6 620.2,595.8 617.6,595.8 615.0,596.0 613.5,593.0 612.0,590.0" fill="#f6f3ef"/>
<polygon points="947.0,322.0 950.0,322.6 953.0,323.0 953.4,325.9 953.8,328.8 954.6,331.6 955.4,334.4 956.5,337.1 957.0,340.0 958.0,342.4 958.6,345.0 958.7,347.7 960.1,350.0 960.9,352.5 961.6,355.0 962.7,357.4 963.0,360.0 962.7,362.7 964.3,365.3 963.9,368.0 963.8,370.7 965.0,373.3 964.9,376.0 965.5,378.6 966.0,381.3 966.0,384.0 963.5,384.4 961.0,384.0 959.9,381.7 960.1,379.0 959.3,376.6 958.8,374.1 957.1,371.9 957.2,369.3 956.1,366.9 955.8,364.4 955.0,362.0 954.5,359.5 953.7,357.2 953.9,354.5 952.2,352.4 952.5,349.7 952.1,347.2 951.1,344.9 950.7,342.4 950.0,340.0 950.2,337.3 948.8,334.9 948.9,332.3 948.6,329.7 947.7,327.2 947.7,324.5 947.0,322.0" fill="#f6f3ef"/>
<polygon points="1000.0,398.0 1002.1,399.9 1004.0,402.0 1005.9,404.1 1007.8,406.2 1010.2,407.8 1012.0,410.0 1013.7,411.9 1015.6,413.6 1017.6,415.2 1019.1,417.3 1021.2,418.8 1022.5,421.1 1024.6,422.6 1026.2,424.6 1028.2,426.2 1030.0,428.0 1026.0,430.0 1024.0,428.2 1021.8,426.7 1019.7,425.0 1018.3,422.5 1016.0,421.1 1014.0,419.3 1012.0,417.5 1010.2,415.5 1008.0,414.0 1006.1,412.2 1004.4,410.3 1003.3,407.8 1001.3,406.0 999.8,403.9 998.0,402.0 1000.0,398.0" fill="#f6f3ef"/>
<polygon points="985.0,420.0 986.2,422.2 987.6,424.3 989.1,426.3 991.4,427.7 992.6,429.9 993.7,432.2 995.2,434.2 997.4,435.7 998.8,437.8 1000.0,440.0 1002.0,441.8 1004.0,443.7 1005.6,445.9 1007.0,448.2 1009.1,450.0 1011.0,452.0 1013.1,453.7 1014.6,455.9 1015.9,458.4 1018.0,460.2 1020.0,462.0 1016.0,463.0 1014.0,461.1 1012.2,459.2 1010.5,457.0 1008.6,455.1 1006.2,453.8 1004.7,451.4 1002.5,449.7 1000.7,447.7 998.6,446.0 996.8,444.0 995.0,442.0 993.4,440.0 992.0,437.9 990.2,436.0 988.9,433.8 987.8,431.4 985.9,429.6 984.6,427.4 983.7,425.0 982.0,423.0 985.0,420.0" fill="#f6f3ef"/>
<polygon points="962.0,320.0 964.6,319.3 967.2,319.0 969.8,318.5 972.5,318.8 975.0,318.0 977.2,319.8 978.6,322.4 980.2,324.7 982.7,326.3 984.4,328.7 985.9,331.1 988.0,333.0 988.4,336.0 989.2,339.0 990.0,341.9 990.0,345.0 987.0,344.6 984.0,344.2 981.0,343.2 978.0,343.0 975.8,341.6 973.9,339.9 972.1,338.1 970.2,336.3 968.0,335.0 966.8,332.6 965.9,330.1 965.1,327.5 964.5,324.8 962.7,322.6 962.0,320.0" fill="#f6f3ef"/>
<polygon points="982.0,362.0 983.7,364.0 985.8,365.2 988.1,366.4 990.0,368.0 991.7,370.1 993.8,371.9 995.8,373.7 997.0,376.2 999.2,377.9 1000.9,380.0 1002.7,382.0 1004.2,384.3 1006.1,386.2 1008.6,387.6 1010.0,390.0 1011.8,392.0 1013.8,393.7 1015.7,395.6 1017.2,397.8 1019.4,399.3 1021.3,401.2 1022.8,403.5 1025.1,404.9 1026.9,406.9 1028.7,408.8 1030.3,410.9 1032.4,412.6 1034.2,414.6 1036.3,416.2 1038.5,417.7 1040.0,420.0 1040.8,422.7 1041.9,425.4 1043.0,428.0 1040.4,426.7 1037.8,425.7 1035.0,425.0 1032.8,423.4 1031.0,421.5 1029.0,419.7 1027.8,417.2 1025.3,416.0 1023.4,414.1 1022.1,411.7 1020.1,409.9 1017.7,408.5 1016.4,406.1 1014.6,404.2 1012.5,402.5 1010.2,401.0 1008.9,398.6 1006.8,396.9 1005.0,395.0 1003.4,393.0 1002.1,390.8 1000.3,389.0 998.7,387.0 996.3,385.7 994.8,383.6 993.3,381.6 991.2,380.1 990.4,377.4 988.1,376.0 986.5,374.1 985.0,372.0 984.0,369.6 983.2,367.1 983.2,364.4 982.0,362.0" fill="#f6f3ef"/>
<polygon points="1000.0,445.0 1002.5,446.8 1005.0,448.5 1007.6,450.2 1010.0,452.0 1012.4,453.4 1014.2,455.4 1015.7,457.7 1017.8,459.5 1019.7,461.3 1022.2,462.6 1024.2,464.3 1026.4,466.0 1028.0,468.2 1030.0,470.0 1028.0,474.0 1025.9,472.5 1024.0,470.8 1022.0,469.2 1020.1,467.5 1017.9,466.1 1016.2,464.1 1013.8,463.1 1012.3,460.8 1010.0,459.5 1008.0,458.0 1006.2,456.1 1005.1,453.8 1004.0,451.5 1002.6,449.4 1001.4,447.1 1000.0,445.0" fill="#f6f3ef"/>
<polygon points="1123.0,524.0 1125.7,523.9 1128.4,523.9 1131.1,524.7 1133.8,524.2 1136.5,524.8 1139.2,525.0 1141.9,524.8 1144.6,524.7 1147.3,525.4 1150.0,525.0 1152.0,527.0 1153.7,529.3 1156.4,530.6 1158.0,533.0 1155.4,533.2 1152.8,533.2 1150.3,534.0 1147.6,533.2 1145.1,534.3 1142.5,533.9 1139.9,534.5 1137.3,533.8 1134.7,534.4 1132.1,534.3 1129.6,534.8 1127.0,535.0 1126.2,532.2 1125.2,529.4 1123.8,526.8 1123.0,524.0" fill="#f6f3ef"/>
<polygon points="1123.0,543.0 1125.7,543.0 1128.4,544.0 1131.1,543.5 1133.7,544.7 1136.5,544.2 1139.3,544.3 1142.0,544.6 1144.6,545.7 1147.2,546.2 1150.0,546.0 1152.5,546.5 1155.0,547.4 1157.6,547.5 1159.9,548.8 1162.4,549.1 1165.1,549.1 1167.6,549.6 1169.9,550.9 1172.6,550.7 1174.9,552.2 1177.6,552.2 1180.0,553.0 1177.5,553.2 1175.0,552.6 1172.5,552.8 1170.0,552.4 1167.5,552.7 1165.0,551.7 1162.5,552.3 1160.0,551.5 1157.5,552.2 1155.0,551.3 1152.5,550.9 1150.0,551.5 1147.5,551.8 1145.0,551.2 1142.5,550.8 1140.0,551.1 1137.5,550.6 1135.0,551.0 1132.5,550.5 1130.0,550.0 1127.5,550.2 1125.0,550.0 1124.2,546.4 1123.0,543.0" fill="#f6f3ef"/>
<polygon points="1093.0,558.0 1095.9,557.9 1098.5,559.2 1101.5,558.8 1104.1,560.1 1107.0,560.0 1105.4,562.3 1105.0,565.0 1102.3,564.2 1099.5,564.5 1096.7,564.5 1094.0,564.0 1093.3,561.0 1093.0,558.0" fill="#f6f3ef"/>
<polygon points="1142.0,569.0 1144.5,569.5 1147.1,569.4 1149.6,570.1 1152.2,569.3 1154.7,570.0 1157.2,570.6 1159.7,570.5 1162.3,570.6 1164.8,570.3 1167.4,570.6 1169.9,570.9 1172.4,571.9 1174.9,572.0 1177.5,571.5 1180.0,572.0 1178.5,574.3 1178.0,577.0 1175.4,577.4 1172.9,576.6 1170.4,576.0 1167.8,576.6 1165.3,575.7 1162.8,575.9 1160.2,576.5 1157.7,576.0 1155.2,575.7 1152.6,575.8 1150.1,575.0 1147.5,575.5 1145.0,575.0 1143.8,571.8 1142.0,569.0" fill="#f6f3ef"/>
<polygon points="1172.0,563.0 1174.6,563.4 1177.2,563.8 1179.6,565.0 1182.3,565.1 1184.7,566.2 1187.2,567.2 1189.8,567.6 1192.4,568.0 1195.0,568.2 1197.5,569.4 1200.0,570.0 1202.4,570.9 1204.2,572.8 1206.7,573.6 1208.6,575.4 1210.9,576.5 1213.1,577.9 1215.1,579.5 1217.5,580.3 1219.7,581.7 1221.4,583.8 1223.9,584.5 1226.0,586.0 1223.3,585.1 1220.6,584.6 1217.7,584.5 1215.0,584.0 1212.3,583.4 1209.8,582.5 1207.7,580.6 1204.8,580.4 1202.5,579.0 1200.0,578.0 1197.3,577.4 1195.0,576.0 1192.4,575.4 1190.0,574.0 1187.8,572.6 1185.5,571.2 1183.2,570.0 1180.8,568.8 1178.7,567.2 1176.3,566.1 1174.0,564.8 1172.0,563.0" fill="#f6f3ef"/>
<polygon points="1199.0,589.0 1201.7,589.2 1204.3,590.4 1207.0,590.5 1209.6,591.5 1212.4,590.9 1215.0,592.0 1217.0,593.6 1219.6,594.3 1221.7,595.7 1224.1,596.6 1226.3,597.9 1228.9,598.6 1231.0,600.0 1228.4,599.3 1225.7,599.7 1223.1,599.2 1220.4,599.1 1217.9,598.3 1215.3,597.7 1212.6,597.6 1210.0,597.0 1208.1,595.0 1205.3,594.2 1203.5,592.1 1201.0,590.9 1199.0,589.0" fill="#f6f3ef"/>
<polygon points="1154.0,592.0 1157.5,592.6 1161.0,593.0 1160.0,596.0 1157.5,595.7 1155.0,596.0 1154.0,592.0" fill="#f6f3ef"/>
<g fill="#77727a" opacity="0.8"><rect x="1036.2" y="360.5" width="1" height="1.5"/><rect x="1064.5" y="381.4" width="1.5" height="1"/><rect x="1119.5" y="192.9" width="1.5" height="1.5"/><rect x="1122.4" y="222.7" width="1.5" height="1"/><rect x="1097.5" y="429.4" width="1" height="1.5"/><rect x="1129.4" y="192.4" width="1.5" height="1.5"/><rect x="1049.8" y="180.9" width="2" height="1.5"/><rect x="1069.9" y="450.3" width="1" height="1"/><rect x="1174.0" y="204.1" width="2" height="1.5"/><rect x="1192.6" y="322.7" width="1" height="1.5"/><rect x="1119.7" y="275.4" width="1" height="1.5"/><rect x="1094.1" y="305.1" width="1" height="1.5"/><rect x="1060.4" y="374.8" width="1" height="1.5"/><rect x="1110.6" y="486.5" width="1.5" height="1"/><rect x="1129.3" y="227.1" width="1.5" height="1.5"/><rect x="1138.5" y="243.9" width="2" height="1.5"/><rect x="1046.3" y="192.2" width="1.5" height="1"/><rect x="1073.2" y="222.8" width="1.5" height="1"/><rect x="1048.2" y="439.1" width="2" height="1.5"/><rect x="1172.6" y="185.5" width="1" height="1.5"/><rect x="1117.1" y="185.7" width="1" height="1"/><rect x="1139.5" y="285.8" width="1" height="1.5"/><rect x="1051.6" y="196.9" width="2" height="1"/><rect x="1113.9" y="181.0" width="1" height="1"/><rect x="1027.4" y="312.8" width="1.5" height="1.5"/><rect x="1116.3" y="224.7" width="1.5" height="1"/><rect x="1177.8" y="302.2" width="2" height="1.5"/><rect x="1077.7" y="422.1" width="1.5" height="1"/><rect x="1102.9" y="174.0" width="1" height="1"/><rect x="1074.3" y="373.0" width="1" height="1.5"/><rect x="1120.9" y="191.0" width="1.5" height="1"/><rect x="1131.0" y="293.4" width="1.5" height="1.5"/><rect x="1039.0" y="329.7" width="2" height="1"/><rect x="1112.4" y="282.0" width="1" height="1"/><rect x="1063.3" y="279.4" width="2" height="1.5"/><rect x="1064.4" y="378.5" width="1" height="1.5"/><rect x="1049.6" y="302.0" width="1.5" height="1.5"/><rect x="1151.0" y="179.4" width="2" height="1"/><rect x="1051.7" y="247.9" width="1.5" height="1.5"/><rect x="1157.8" y="253.5" width="1" height="1"/><rect x="1025.3" y="322.3" width="1.5" height="1"/><rect x="1135.1" y="205.6" width="1" height="1"/><rect x="1054.2" y="286.8" width="1" height="1"/><rect x="1164.2" y="323.5" width="2" height="1.5"/><rect x="1168.9" y="229.2" width="1" height="1"/><rect x="1057.4" y="397.6" width="2" height="1"/><rect x="1175.3" y="327.9" width="1" height="1"/><rect x="1098.9" y="236.8" width="1" height="1.5"/><rect x="1158.3" y="290.8" width="1.5" height="1.5"/><rect x="1155.7" y="264.9" width="1" height="1.5"/><rect x="1059.5" y="315.9" width="2" height="1.5"/><rect x="1075.3" y="313.3" width="1.5" height="1.5"/><rect x="1182.9" y="224.6" width="2" height="1.5"/><rect x="1184.4" y="247.7" width="2" height="1"/><rect x="1047.1" y="289.4" width="1" height="1"/><rect x="1111.6" y="270.5" width="1" height="1"/><rect x="1159.2" y="185.8" width="2" height="1"/><rect x="1116.6" y="289.5" width="2" height="1"/><rect x="1087.6" y="443.8" width="1" height="1"/><rect x="1060.6" y="239.1" width="1" height="1.5"/><rect x="1099.9" y="455.9" width="1" height="1.5"/><rect x="1162.1" y="172.6" width="1" height="1"/><rect x="1042.7" y="354.5" width="2" height="1"/><rect x="1151.9" y="170.6" width="1" height="1"/><rect x="1003.5" y="345.7" width="1.5" height="1"/><rect x="1052.9" y="280.1" width="1" height="1.5"/><rect x="1060.5" y="396.4" width="1" height="1.5"/><rect x="1111.1" y="296.3" width="1.5" height="1.5"/><rect x="1011.6" y="364.4" width="1.5" height="1"/><rect x="1138.9" y="303.1" width="1" height="1"/><rect x="1065.3" y="381.6" width="1" height="1.5"/><rect x="1153.3" y="303.1" width="1" height="1"/><rect x="1077.8" y="300.3" width="1" height="1.5"/><rect x="1091.7" y="416.0" width="1" height="1.5"/><rect x="1075.4" y="412.9" width="1.5" height="1"/><rect x="1084.1" y="255.8" width="1" height="1.5"/><rect x="1000.4" y="318.7" width="1" height="1"/><rect x="1076.6" y="477.9" width="1" height="1.5"/><rect x="1186.3" y="301.0" width="2" height="1.5"/><rect x="1041.4" y="332.5" width="1" height="1.5"/><rect x="1007.2" y="375.7" width="1" height="1.5"/><rect x="1151.5" y="185.5" width="1.5" height="1"/><rect x="1174.3" y="232.7" width="2" height="1.5"/><rect x="1156.7" y="182.7" width="2" height="1.5"/><rect x="1138.8" y="207.4" width="1" height="1.5"/><rect x="1106.3" y="459.8" width="1" height="1.5"/><rect x="1038.7" y="385.6" width="1.5" height="1.5"/><rect x="1147.0" y="307.8" width="2" height="1.5"/><rect x="1064.0" y="308.8" width="2" height="1"/><rect x="1060.3" y="316.4" width="1" height="1"/><rect x="1002.9" y="345.1" width="1.5" height="1.5"/><rect x="1194.2" y="314.5" width="1" height="1.5"/><rect x="1145.7" y="226.2" width="1" height="1"/><rect x="1089.0" y="395.0" width="1" height="1"/><rect x="1177.9" y="222.3" width="1" height="1.5"/><rect x="1080.3" y="421.6" width="1" height="1"/><rect x="1027.8" y="375.0" width="1" height="1"/><rect x="1052.7" y="251.3" width="1" height="1.5"/><rect x="1048.6" y="416.9" width="2" height="1"/><rect x="1073.8" y="468.8" width="1" height="1"/><rect x="1110.7" y="263.5" width="2" height="1.5"/><rect x="1088.1" y="304.0" width="1.5" height="1.5"/><rect x="1054.2" y="441.0" width="1" height="1"/><rect x="1085.6" y="462.1" width="1" height="1.5"/><rect x="1088.5" y="422.2" width="1" height="1.5"/><rect x="1169.2" y="310.1" width="2" height="1"/><rect x="1085.5" y="250.4" width="1" height="1"/><rect x="1168.6" y="254.7" width="1" height="1.5"/><rect x="1052.4" y="318.2" width="2" height="1"/><rect x="1141.7" y="200.1" width="1" height="1.5"/></g>
<polyline points="665.0,134.0 669.4,135.0 674.1,134.0 678.6,134.9 683.0,136.0 684.9,132.3 687.3,128.8 687.1,124.1 689.9,120.8 691.7,117.0 693.0,113.0 697.4,113.0 701.6,111.3 706.1,111.7 710.3,110.3 714.8,110.6 719.0,109.0 723.4,108.3 727.6,110.6 732.0,109.8 736.3,110.1 740.7,109.8 745.0,111.0 749.1,108.8 753.9,108.1 758.1,106.4 762.1,103.6 766.5,102.3 771.0,101.0 774.9,99.9 778.9,99.7 783.0,100.0 778.8,103.5 774.0,106.0 775.0,110.3 774.3,114.8 776.0,119.0 778.2,123.1 781.5,126.2 785.0,129.2 788.0,132.6 791.0,136.0 794.7,139.3 798.5,142.2 802.7,144.7 807.0,147.0 810.7,148.6 814.9,149.0 818.4,151.3 822.1,153.1 826.0,154.3 830.0,155.0 834.4,154.4 838.6,156.1 843.0,155.7 847.4,155.6 851.6,157.7 856.0,157.0 859.9,158.7 863.8,160.2 868.0,161.0 872.0,160.2 876.0,161.7 880.0,161.0 883.8,162.8 887.8,163.6 891.9,164.1 895.8,165.1 899.9,165.9 904.0,166.3 908.0,167.0 912.2,167.7 916.1,169.4 920.3,170.2 924.4,171.2 928.8,170.9 932.7,173.1 937.0,173.0 941.2,174.1 945.3,176.0 949.9,175.2 953.8,178.0 958.1,178.6 962.6,178.5 966.6,180.7 971.0,181.0 973.6,177.1 977.0,174.0 981.0,171.6 985.5,170.4 989.5,168.2 994.0,167.0 995.7,163.3 998.2,160.0 999.0,156.0 1003.7,155.4 1008.3,154.5 1012.7,152.8 1017.5,152.6 1022.0,151.0 1026.5,151.9 1031.0,151.9 1035.4,152.7 1040.0,152.0 1045.7,151.2 1051.0,149.0 1055.2,147.6 1059.2,145.6 1063.8,145.6 1068.0,144.0 1071.8,145.7 1076.1,145.7 1079.9,147.2 1083.8,148.7 1088.0,149.0 1087.9,144.1 1085.4,139.7 1085.7,134.8 1085.0,130.0 1088.4,126.1 1092.5,123.3 1097.0,121.0 1101.2,117.8 1104.2,113.5 1108.0,110.0 1112.7,110.2 1117.3,109.9 1122.0,110.0 1124.7,106.7 1128.0,104.0 1125.9,98.7 1125.0,93.0 1123.7,88.1 1123.7,82.9 1122.0,78.0 1122.8,73.8 1122.5,69.4 1122.6,65.1 1124.0,61.0 1127.8,58.3 1132.2,56.9 1135.9,54.1 1140.0,52.0" fill="none" stroke="#a19fb0" stroke-width="2.6" stroke-linejoin="round"/>
<polyline points="1097.0,121.0 1101.1,122.8 1105.3,124.6 1110.0,124.7 1114.0,127.0 1114.4,131.3 1116.5,135.3 1115.6,139.9 1117.0,144.0 1119.6,147.2 1121.4,150.8 1122.1,155.0 1125.0,158.0 1128.2,161.8 1131.0,166.0 1135.5,167.7 1139.1,171.3 1143.6,173.0 1148.0,175.0 1150.1,179.0 1153.7,181.9 1156.3,185.5 1159.0,189.0 1161.8,192.6 1165.8,194.6 1168.5,198.2 1173.0,199.7 1176.0,203.0 1178.5,206.5 1182.5,208.5 1185.0,212.0 1188.0,215.0 1191.0,218.8 1192.6,223.2 1193.1,228.2 1196.0,232.0" fill="none" stroke="#a19fb0" stroke-width="2.6" stroke-linejoin="round"/>
<polyline points="880.0,161.0 880.6,165.0 880.3,169.1 882.0,172.9 882.3,177.0 883.4,180.9 883.0,185.0 881.6,189.0 879.6,192.7 879.0,197.0 881.4,201.0 884.0,204.9 885.4,209.5 887.9,213.4 891.0,217.0 889.6,220.9 889.9,225.2 887.7,228.9 887.0,233.0 889.5,236.1 891.0,240.0 894.4,242.4 896.3,246.0 899.0,249.0 900.7,253.5 903.2,257.6 905.0,262.0" fill="none" stroke="#a19fb0" stroke-width="2.6" stroke-linejoin="round"/>
<polyline points="891.0,288.0 895.0,286.8 899.1,285.9 903.3,285.1 907.0,283.0 912.0,283.3 917.0,283.4 922.0,284.0 926.3,285.4 930.9,283.8 935.1,285.9 939.6,286.0 944.0,286.0 950.0,287.0 953.8,285.4 957.5,283.4 961.5,282.3 965.0,280.0 968.7,276.5 971.4,272.3 974.0,268.0 976.3,271.4 980.3,273.3 982.5,276.7 985.0,280.0 988.5,282.1 990.3,286.1 994.0,288.0 998.2,289.8 1003.0,289.2 1007.2,291.2 1011.6,292.2 1016.0,293.0 1020.0,290.8 1024.4,290.3 1028.9,289.8 1033.0,288.0 1034.3,284.1 1034.5,279.9 1036.0,276.0 1033.8,272.0 1030.3,268.9 1028.0,265.0 1029.6,259.5 1031.0,254.0 1034.4,251.6 1038.6,250.4 1041.7,247.5 1045.0,245.0 1049.0,246.0 1053.8,245.7 1058.4,244.4 1063.0,243.0 1062.0,238.8 1062.5,234.3 1061.2,230.2 1060.0,226.0 1058.4,221.2 1055.6,216.9 1054.0,212.0 1054.8,206.3 1057.0,201.0 1061.7,199.2 1066.6,197.7 1071.0,195.0 1074.7,193.2 1077.5,190.1 1080.5,187.4 1084.4,185.7 1088.1,184.0 1091.0,181.0 1095.1,179.5 1099.6,180.0 1103.6,178.0 1108.0,178.0 1107.6,173.5 1108.0,169.0 1111.9,164.7 1117.0,162.0 1121.8,162.9 1126.4,164.4 1131.0,166.0" fill="none" stroke="#a19fb0" stroke-width="2.6" stroke-linejoin="round"/>
<polyline points="1071.0,316.0 1075.8,317.0 1080.5,317.0 1085.2,315.3 1090.0,316.0 1093.2,319.0 1095.0,323.2 1099.1,325.4 1101.7,328.9 1104.4,332.3 1107.8,335.1 1110.0,339.0 1112.3,335.3 1115.2,332.2 1117.8,328.8 1121.5,326.3 1122.9,322.0 1126.0,319.0 1129.9,317.7 1134.1,318.6 1138.0,316.9 1142.1,317.1 1146.0,316.0 1150.1,315.6 1153.9,313.9 1157.9,312.9 1162.0,313.0 1166.1,315.2 1170.7,316.3 1175.0,318.1 1179.2,320.0 1183.5,321.9 1188.0,323.0 1192.6,323.5 1197.0,325.0" fill="none" stroke="#a19fb0" stroke-width="2.6" stroke-linejoin="round"/>
<polyline points="1071.0,316.0 1071.0,320.4 1069.4,324.6 1069.9,329.0 1070.1,333.4 1069.0,337.6 1069.5,342.0 1068.1,346.3 1069.3,350.7 1068.0,355.0 1070.7,358.9 1074.3,361.9 1077.8,365.0 1080.1,369.3 1084.0,372.0 1086.3,375.5 1088.2,379.2 1090.4,382.7 1091.3,386.9 1092.8,390.8 1094.8,394.5 1097.0,398.0 1097.9,402.0 1097.7,406.1 1099.8,409.9 1100.1,413.9 1100.0,418.1 1100.0,422.2 1101.4,426.0 1101.9,430.1 1103.0,434.0 1105.9,437.6 1109.8,440.2 1112.3,444.2 1116.0,447.1 1119.9,449.6 1123.0,453.0 1125.8,456.9 1127.6,461.4 1131.1,464.8 1134.0,468.6 1136.0,473.0 1138.0,476.8 1141.3,479.7 1144.0,483.0 1146.4,486.6 1148.6,490.2 1152.0,493.0 1157.0,494.6 1161.5,497.3 1166.0,500.0 1170.2,501.5 1173.4,504.5 1177.0,507.0 1180.3,510.0 1184.1,512.0 1188.0,514.0 1189.6,517.9 1191.6,521.6 1193.0,525.6 1195.3,529.2 1195.9,533.6 1197.7,537.4 1200.0,541.0 1202.8,544.3 1207.0,545.9 1209.5,549.5 1213.0,552.0 1215.0,556.3 1218.0,560.0 1219.8,564.5 1223.0,568.0 1217.0,573.0 1222.3,574.9 1228.0,575.0 1231.2,577.9 1234.6,580.6 1238.3,582.8 1242.0,585.0 1245.2,587.7 1249.6,588.3 1252.6,591.4 1256.2,593.4 1260.0,595.0 1263.5,598.2 1267.6,600.6 1271.0,604.0 1275.3,606.3 1278.2,610.2 1282.0,613.0" fill="none" stroke="#a19fb0" stroke-width="2.6" stroke-linejoin="round"/>
<polyline points="1291.0,630.0 1288.0,626.5 1284.0,624.0 1282.5,618.6 1282.0,613.0 1288.0,613.0 1292.0,611.5 1293.0,606.0 1294.0,599.0 1288.0,595.0 1286.0,587.5 1286.4,582.6 1288.0,578.0 1287.4,572.5 1288.0,567.0 1291.0,563.5 1294.8,561.9 1299.0,562.0 1299.9,557.0 1300.0,552.0 1301.8,547.2 1301.5,542.0 1304.0,538.0 1308.4,535.5 1312.0,532.0 1315.0,527.5 1321.0,526.6 1325.0,530.0 1326.8,533.9 1328.0,538.0 1332.3,534.3 1336.0,530.0 1334.4,526.2 1335.4,521.9 1334.0,518.0" fill="none" stroke="#a19fb0" stroke-width="2.6" stroke-linejoin="round"/>
<polyline points="1354.0,518.0 1357.3,520.5 1360.7,522.8 1362.8,526.6 1366.5,528.6 1369.0,532.0 1371.7,535.5 1374.3,539.0 1375.9,543.2 1378.0,547.0 1382.2,548.4 1386.3,550.1 1391.0,549.8 1395.0,552.0 1398.8,554.0 1403.3,553.9 1407.0,556.0 1410.7,558.6 1413.3,562.2 1417.0,564.7 1420.0,568.0 1424.5,570.0 1428.6,572.8 1433.0,575.0 1435.6,579.8 1437.0,585.0 1432.6,585.8 1428.8,588.4 1424.2,588.5 1420.0,590.0 1416.0,592.0 1413.9,596.0 1412.0,600.0 1415.0,604.6 1416.0,610.0 1417.0,615.0 1412.5,615.9 1408.8,619.0 1404.2,619.5 1400.0,621.0 1393.0,621.0 1391.8,616.8 1390.1,612.7 1390.3,608.2 1389.0,604.0 1385.0,607.3 1381.5,611.2 1378.0,615.0 1375.7,619.0 1373.0,622.7 1370.3,626.4 1368.5,630.7 1364.8,633.7 1363.0,638.0 1359.5,641.0 1357.3,644.8 1354.4,648.2 1352.9,652.6 1350.0,656.0 1352.7,659.2 1357.2,659.9 1360.0,663.0 1359.8,667.0 1360.2,671.1 1359.2,675.0 1358.5,679.0 1358.1,683.0 1358.4,687.0 1358.0,691.0" fill="none" stroke="#a19fb0" stroke-width="2.6" stroke-linejoin="round"/>
<polyline points="1416.0,615.0 1418.6,618.8 1421.3,622.7 1423.2,626.9 1425.7,630.8 1428.2,634.7 1430.0,639.0 1434.9,640.8 1440.0,641.7 1445.0,643.0 1447.5,647.3 1450.3,651.4 1452.0,656.0 1452.6,660.5 1454.7,664.6 1455.5,669.0 1455.9,673.5 1456.6,678.0 1457.0,682.5 1458.5,686.7 1460.0,691.0" fill="none" stroke="#a19fb0" stroke-width="2.6" stroke-linejoin="round"/>
<polyline points="1437.0,585.0 1441.9,583.2 1446.2,580.5 1450.0,577.0 1452.8,573.9 1455.2,570.5 1456.4,566.2 1459.1,563.0 1462.0,560.0 1460.0,556.0 1460.8,551.3 1459.5,547.1 1458.0,543.0 1461.9,541.8 1465.3,539.5 1469.1,538.2 1473.0,537.0 1477.4,539.4 1481.0,543.0 1484.6,546.0 1487.9,549.4 1492.5,550.9 1496.0,554.0 1499.2,558.2 1501.3,563.0 1503.0,568.0 1506.5,570.8 1509.1,574.7 1513.0,577.0 1517.1,579.0 1521.7,579.6 1526.0,581.0" fill="none" stroke="#a19fb0" stroke-width="2.6" stroke-linejoin="round"/>
<polyline points="1469.0,691.0 1468.9,686.8 1469.6,682.8 1470.4,678.9 1472.5,675.1 1472.5,671.0 1474.3,667.2 1474.0,663.0 1478.1,662.3 1481.7,660.5 1485.1,658.2 1489.1,657.4 1492.3,654.4 1496.0,652.8 1500.0,652.0 1504.5,651.4 1509.0,650.5 1513.4,649.1 1518.0,649.0 1521.9,647.5 1526.0,647.0" fill="none" stroke="#a19fb0" stroke-width="2.6" stroke-linejoin="round"/>
<polyline points="366.0,432.0 370.0,429.0 374.0,432.0 378.0,434.0" fill="none" stroke="#a19fb0" stroke-width="2.6" stroke-linejoin="round"/>
<polyline points="373.0,52.0 374.5,56.0 381.0,58.0 385.4,56.5 390.0,57.0 396.0,54.0 392.0,51.0" fill="none" stroke="#a19fb0" stroke-width="2.6" stroke-linejoin="round"/>
<polyline points="433.0,51.0 438.0,57.0 436.0,61.0" fill="none" stroke="#a19fb0" stroke-width="2.6" stroke-linejoin="round"/>
<polyline points="366.0,230.0 370.0,235.0 368.0,239.0 372.2,241.4 377.0,242.0" fill="none" stroke="#a19fb0" stroke-width="2.6" stroke-linejoin="round"/>
<polyline points="366.0,282.0 368.7,285.3 372.0,288.0 369.1,291.6 368.0,296.0 370.2,300.2 374.0,303.0 371.6,306.6 369.0,310.0 371.1,314.3 374.0,318.0 370.1,320.2 366.0,322.0" fill="none" stroke="#a19fb0" stroke-width="2.6" stroke-linejoin="round"/>
<polyline points="630.0,51.0 634.7,54.1 640.0,56.0 645.1,56.1 649.9,53.9 655.0,54.0 660.4,55.0 665.0,58.0" fill="none" stroke="#a19fb0" stroke-width="2.6" stroke-linejoin="round"/>
<polyline points="1505.0,150.0 1507.8,153.0 1509.5,156.8 1512.0,160.0 1510.8,165.1 1509.0,170.0 1512.8,171.5 1515.0,175.4 1518.2,177.7 1521.8,179.5 1525.0,182.0" fill="none" stroke="#a19fb0" stroke-width="2.6" stroke-linejoin="round"/>
<polygon points="887.0,290.0 893.0,291.0 894.0,300.0 898.0,300.0 897.0,302.0 891.0,303.0" fill="#ee1c3f"/>
<polygon points="907.0,294.0 917.0,293.0 917.0,298.0 908.0,299.0" fill="#ee1c3f"/>
<polygon points="900.0,304.0 908.0,304.0 913.0,308.0 927.0,324.0 926.0,327.0 924.0,327.0 925.0,333.0 921.0,333.0 920.0,325.0 913.0,318.0 903.0,308.0 899.0,305.0" fill="#ee1c3f"/>
<polygon points="930.0,323.0 933.0,324.0 934.0,328.0 930.0,328.0" fill="#ee1c3f"/>
<polygon points="1052.0,444.0 1058.0,446.0 1055.0,449.0" fill="#ee1c3f"/>
<polygon points="1085.0,462.0 1092.0,460.0 1096.0,466.0 1090.0,467.0" fill="#ee1c3f"/>
<text x="816.1" y="91.2" textLength="88.8" lengthAdjust="spacingAndGlyphs" font-family="Liberation Sans" font-weight="bold" font-size="12" fill="#454857" stroke="#f6f3ef" stroke-width="2.2" paint-order="stroke" stroke-linejoin="round">ÖSTERREICH</text>
<text x="1028.5" y="104.7" textLength="25.5" lengthAdjust="spacingAndGlyphs" font-family="Liberation Sans" font-size="12.2" fill="#585858" stroke="#f6f3ef" stroke-width="2.2" paint-order="stroke" stroke-linejoin="round">Graz</text>
<text x="1314.5" y="92.6" textLength="109.4" lengthAdjust="spacingAndGlyphs" font-family="Liberation Sans" font-weight="bold" font-size="12" fill="#454857" stroke="#f6f3ef" stroke-width="2.2" paint-order="stroke" stroke-linejoin="round">MAGYARORSZÁG</text>
<text x="921" y="158" textLength="57.6" lengthAdjust="spacingAndGlyphs" font-family="Liberation Sans" font-size="12.2" fill="#585858" stroke="#f6f3ef" stroke-width="2.2" paint-order="stroke" stroke-linejoin="round">Klagenfurt</text>
<text x="1035.7" y="166.1" textLength="43.8" lengthAdjust="spacingAndGlyphs" font-family="Liberation Sans" font-size="12.2" fill="#585858" stroke="#f6f3ef" stroke-width="2.2" paint-order="stroke" stroke-linejoin="round">Maribor</text>
<text x="667.2" y="173.2" textLength="89.2" lengthAdjust="spacingAndGlyphs" font-family="Liberation Sans" font-size="12.2" fill="#585858" stroke="#f6f3ef" stroke-width="2.2" paint-order="stroke" stroke-linejoin="round">Bolzano - Bozen</text>
<text x="675.4" y="223.8" textLength="35.9" lengthAdjust="spacingAndGlyphs" font-family="Liberation Sans" font-size="12.2" fill="#585858" stroke="#f6f3ef" stroke-width="2.2" paint-order="stroke" stroke-linejoin="round">Trento</text>
<text x="971" y="225.3" textLength="50.0" lengthAdjust="spacingAndGlyphs" font-family="Liberation Sans" font-size="12.2" fill="#585858" stroke="#f6f3ef" stroke-width="2.2" paint-order="stroke" stroke-linejoin="round">Ljubljana</text>
<text x="928.3" y="253.1" textLength="71.1" lengthAdjust="spacingAndGlyphs" font-family="Liberation Sans" font-weight="bold" font-size="12" fill="#454857" stroke="#f6f3ef" stroke-width="2.2" paint-order="stroke" stroke-linejoin="round">SLOVENIJA</text>
<text x="1089.7" y="253.1" textLength="38.9" lengthAdjust="spacingAndGlyphs" font-family="Liberation Sans" font-size="12.2" fill="#585858" stroke="#f6f3ef" stroke-width="2.2" paint-order="stroke" stroke-linejoin="round">Zagreb</text>
<text x="1133.8" y="282" textLength="66.2" lengthAdjust="spacingAndGlyphs" font-family="Liberation Sans" font-weight="bold" font-size="12" fill="#454857" stroke="#f6f3ef" stroke-width="2.2" paint-order="stroke" stroke-linejoin="round">HRVATSKA</text>
<text x="659.5" y="296.4" textLength="42.3" lengthAdjust="spacingAndGlyphs" font-family="Liberation Sans" font-size="12.2" fill="#585858" stroke="#f6f3ef" stroke-width="2.2" paint-order="stroke" stroke-linejoin="round">Verona</text>
<text x="769.5" y="296.4" textLength="42.5" lengthAdjust="spacingAndGlyphs" font-family="Liberation Sans" font-size="12.2" fill="#585858" stroke="#f6f3ef" stroke-width="2.2" paint-order="stroke" stroke-linejoin="round">Venezia</text>
<text x="901.2" y="360.2" textLength="23.0" lengthAdjust="spacingAndGlyphs" font-family="Liberation Sans" font-size="12.2" fill="#585858" stroke="#f6f3ef" stroke-width="2.2" paint-order="stroke" stroke-linejoin="round">Pula</text>
<text x="713.4" y="364.7" textLength="39.2" lengthAdjust="spacingAndGlyphs" font-family="Liberation Sans" font-size="12.2" fill="#585858" stroke="#f6f3ef" stroke-width="2.2" paint-order="stroke" stroke-linejoin="round">Ferrara</text>
<text x="1122.4" y="348.8" textLength="43.1" lengthAdjust="spacingAndGlyphs" font-family="Liberation Sans" font-size="12.2" fill="#585858" stroke="#f6f3ef" stroke-width="2.2" paint-order="stroke" stroke-linejoin="round">Prijedor</text>
<text x="1153" y="372.7" textLength="57.0" lengthAdjust="spacingAndGlyphs" font-family="Liberation Sans" font-size="12.2" fill="#585858" stroke="#f6f3ef" stroke-width="2.2" paint-order="stroke" stroke-linejoin="round">Banja Luka</text>
<text x="687.8" y="403.9" textLength="45.5" lengthAdjust="spacingAndGlyphs" font-family="Liberation Sans" font-size="12.2" fill="#585858" stroke="#f6f3ef" stroke-width="2.2" paint-order="stroke" stroke-linejoin="round">Bologna</text>
<text x="756.6" y="412.4" textLength="46.9" lengthAdjust="spacingAndGlyphs" font-family="Liberation Sans" font-size="12.2" fill="#585858" stroke="#f6f3ef" stroke-width="2.2" paint-order="stroke" stroke-linejoin="round">Ravenna</text>
<text x="1187.4" y="417.5" textLength="42.6" lengthAdjust="spacingAndGlyphs" font-family="Liberation Sans" font-weight="bold" font-size="12" fill="#454857" stroke="#f6f3ef" stroke-width="2.2" paint-order="stroke" stroke-linejoin="round">BOSNA I</text>
<text x="1167.8" y="434.4" textLength="82.2" lengthAdjust="spacingAndGlyphs" font-family="Liberation Sans" font-weight="bold" font-size="12" fill="#454857" stroke="#f6f3ef" stroke-width="2.2" paint-order="stroke" stroke-linejoin="round">HERCEGOVINA</text>
<text x="787" y="457.8" textLength="27.0" lengthAdjust="spacingAndGlyphs" font-family="Liberation Sans" font-weight="bold" font-size="12" fill="#454857" stroke="#f6f3ef" stroke-width="2.2" paint-order="stroke" stroke-linejoin="round">SAN</text>
<text x="772.8" y="474.3" textLength="55.7" lengthAdjust="spacingAndGlyphs" font-family="Liberation Sans" font-weight="bold" font-size="12" fill="#454857" stroke="#f6f3ef" stroke-width="2.2" paint-order="stroke" stroke-linejoin="round">MARINO</text>
<text x="1008.6" y="446.2" textLength="32.0" lengthAdjust="spacingAndGlyphs" font-family="Liberation Sans" font-size="12.2" fill="#585858" stroke="#f6f3ef" stroke-width="2.2" paint-order="stroke" stroke-linejoin="round">Zadar</text>
<text x="683.6" y="485.4" textLength="39.8" lengthAdjust="spacingAndGlyphs" font-family="Liberation Sans" font-size="12.2" fill="#585858" stroke="#f6f3ef" stroke-width="2.2" paint-order="stroke" stroke-linejoin="round">Firenze</text>
<text x="865.4" y="502.4" textLength="41.2" lengthAdjust="spacingAndGlyphs" font-family="Liberation Sans" font-size="12.2" fill="#585858" stroke="#f6f3ef" stroke-width="2.2" paint-order="stroke" stroke-linejoin="round">Ancona</text>
<text x="1109.9" y="513.4" textLength="24.2" lengthAdjust="spacingAndGlyphs" font-family="Liberation Sans" font-size="12.2" fill="#585858" stroke="#f6f3ef" stroke-width="2.2" paint-order="stroke" stroke-linejoin="round">Split</text>
<text x="606.9" y="509.7" textLength="41.2" lengthAdjust="spacingAndGlyphs" font-family="Liberation Sans" font-size="12.2" fill="#585858" stroke="#f6f3ef" stroke-width="2.2" paint-order="stroke" stroke-linejoin="round">Livorno</text>
<text x="735.3" y="519.8" textLength="36.9" lengthAdjust="spacingAndGlyphs" font-family="Liberation Sans" font-size="12.2" fill="#585858" stroke="#f6f3ef" stroke-width="2.2" paint-order="stroke" stroke-linejoin="round">Arezzo</text>
<text x="695" y="535.6" textLength="29.7" lengthAdjust="spacingAndGlyphs" font-family="Liberation Sans" font-size="12.2" fill="#585858" stroke="#f6f3ef" stroke-width="2.2" paint-order="stroke" stroke-linejoin="round">Siena</text>
<text x="1213.1" y="532.9" textLength="38.3" lengthAdjust="spacingAndGlyphs" font-family="Liberation Sans" font-size="12.2" fill="#585858" stroke="#f6f3ef" stroke-width="2.2" paint-order="stroke" stroke-linejoin="round">Mostar</text>
<text x="773.4" y="558.4" textLength="42.9" lengthAdjust="spacingAndGlyphs" font-family="Liberation Sans" font-size="12.2" fill="#585858" stroke="#f6f3ef" stroke-width="2.2" paint-order="stroke" stroke-linejoin="round">Perugia</text>
<text x="1322.7" y="572.7" textLength="95.3" lengthAdjust="spacingAndGlyphs" font-family="Liberation Sans" font-weight="bold" font-size="12" fill="#454857" stroke="#f6f3ef" stroke-width="2.2" paint-order="stroke" stroke-linejoin="round">MONTENEGRO</text>
<text x="541.3" y="603.1" textLength="33.4" lengthAdjust="spacingAndGlyphs" font-family="Liberation Sans" font-size="12.2" fill="#585858" stroke="#f6f3ef" stroke-width="2.2" paint-order="stroke" stroke-linejoin="round">Bastia</text>
<text x="794.4" y="611.6" textLength="47.6" lengthAdjust="spacingAndGlyphs" font-family="Liberation Sans" font-weight="bold" font-size="12" fill="#454857" stroke="#f6f3ef" stroke-width="2.2" paint-order="stroke" stroke-linejoin="round">ITALIA</text>
<text x="1227" y="608.3" textLength="57.2" lengthAdjust="spacingAndGlyphs" font-family="Liberation Sans" font-size="12.2" fill="#585858" stroke="#f6f3ef" stroke-width="2.2" paint-order="stroke" stroke-linejoin="round">Dubrovnik</text>
<text x="1421.2" y="608.4" textLength="22.9" lengthAdjust="spacingAndGlyphs" font-family="Liberation Sans" font-size="12.2" fill="#585858" stroke="#f6f3ef" stroke-width="2.2" paint-order="stroke" stroke-linejoin="round">Pejë</text>
<text x="1452" y="608.4" textLength="60.0" lengthAdjust="spacingAndGlyphs" font-family="Liberation Sans" font-weight="bold" font-size="12" fill="#454857" stroke="#f6f3ef" stroke-width="2.2" paint-order="stroke" stroke-linejoin="round">KOSOVË /</text>
<text x="1454.5" y="625" textLength="55.4" lengthAdjust="spacingAndGlyphs" font-family="Liberation Sans" font-weight="bold" font-size="12" fill="#454857" stroke="#f6f3ef" stroke-width="2.2" paint-order="stroke" stroke-linejoin="round">KOSOVO</text>
<text x="919.9" y="629" textLength="43.2" lengthAdjust="spacingAndGlyphs" font-family="Liberation Sans" font-size="12.2" fill="#585858" stroke="#f6f3ef" stroke-width="2.2" paint-order="stroke" stroke-linejoin="round">Pescara</text>
<text x="1355.1" y="632" textLength="55.4" lengthAdjust="spacingAndGlyphs" font-family="Liberation Sans" font-size="12.2" fill="#585858" stroke="#f6f3ef" stroke-width="2.2" paint-order="stroke" stroke-linejoin="round">Podgorica</text>
<text x="856" y="642.3" textLength="42.3" lengthAdjust="spacingAndGlyphs" font-family="Liberation Sans" font-size="12.2" fill="#585858" stroke="#f6f3ef" stroke-width="2.2" paint-order="stroke" stroke-linejoin="round">L'Aquila</text>
<text x="711" y="670" textLength="71.8" lengthAdjust="spacingAndGlyphs" font-family="Liberation Sans" font-size="12.2" fill="#585858" stroke="#f6f3ef" stroke-width="2.2" paint-order="stroke" stroke-linejoin="round">Civitavecchia</text>
<text x="1347.3" y="672.6" textLength="45.1" lengthAdjust="spacingAndGlyphs" font-family="Liberation Sans" font-size="12.2" fill="#585858" stroke="#f6f3ef" stroke-width="2.2" paint-order="stroke" stroke-linejoin="round">Shkodër</text>
<text x="481.4" y="688.5" textLength="38.7" lengthAdjust="spacingAndGlyphs" font-family="Liberation Sans" font-size="12.2" fill="#585858" stroke="#f6f3ef" stroke-width="2.2" paint-order="stroke" stroke-linejoin="round">Ajaccio</text>
<text x="808.5" y="694" textLength="33.2" lengthAdjust="spacingAndGlyphs" font-family="Liberation Sans" font-size="12.2" fill="#585858" stroke="#f6f3ef" stroke-width="2.2" paint-order="stroke" stroke-linejoin="round">Roma</text>
<text x="515" y="97" textLength="102.0" lengthAdjust="spacingAndGlyphs" font-family="Liberation Sans" font-weight="bold" font-size="12" fill="#454857" stroke="#f6f3ef" stroke-width="2.2" paint-order="stroke" stroke-linejoin="round">LIECHTENSTEIN</text>
<text x="1329" y="55.5" textLength="60.0" lengthAdjust="spacingAndGlyphs" font-family="Liberation Sans" font-size="12.2" fill="#585858" stroke="#f6f3ef" stroke-width="2.2" paint-order="stroke" stroke-linejoin="round">Budapest</text>
<text x="1507" y="261" textLength="18.0" lengthAdjust="spacingAndGlyphs" font-family="Liberation Sans" font-size="12.2" fill="#585858" stroke="#f6f3ef" stroke-width="2.2" paint-order="stroke" stroke-linejoin="round">soa</text>
<text x="366" y="488" font-family="Liberation Sans" font-style="italic" font-size="13" fill="#555">M</text>
<path d="M965.3 216.8 L966.5 219.7 L969.3 219.7 L967.0999999999999 221.6 L967.9 224.6 L965.3 222.8 L962.6999999999999 224.6 L963.5 221.6 L961.3 219.7 L964.0999999999999 219.7Z" fill="#333"/>
<path d="M1084 244.3 L1085.2 247.2 L1088 247.2 L1085.8 249.1 L1086.6 252.1 L1084 250.3 L1081.4 252.1 L1082.2 249.1 L1080 247.2 L1082.8 247.2Z" fill="#333"/>
<path d="M1349.6 623.3 L1350.8 626.2 L1353.6 626.2 L1351.3999999999999 628.1 L1352.1999999999998 631.1 L1349.6 629.3 L1347.0 631.1 L1347.8 628.1 L1345.6 626.2 L1348.3999999999999 626.2Z" fill="#333"/>
<path d="M800 685.3 L801.2 688.2 L804 688.2 L801.8 690.1 L802.6 693.1 L800 691.3 L797.4 693.1 L798.2 690.1 L796 688.2 L798.8 688.2Z" fill="#333"/>
<path d="M1325 46.8 L1326.2 49.7 L1329 49.7 L1326.8 51.6 L1327.6 54.6 L1325 52.8 L1322.4 54.6 L1323.2 51.6 L1321 49.7 L1323.8 49.7Z" fill="#333"/>
<text x="522" y="508.3" text-anchor="middle" font-family="Liberation Sans" font-style="italic" font-size="12" letter-spacing="1.2" fill="#8ab0e0" stroke="#d6e6f7" stroke-width="0.6" paint-order="stroke">Ligure</text>
<text x="522" y="523.2" text-anchor="middle" font-family="Liberation Sans" font-style="italic" font-size="12" letter-spacing="1.2" fill="#8ab0e0" stroke="#d6e6f7" stroke-width="0.6" paint-order="stroke">/ Mer</text>
<text x="522" y="538.1" text-anchor="middle" font-family="Liberation Sans" font-style="italic" font-size="12" letter-spacing="1.2" fill="#8ab0e0" stroke="#d6e6f7" stroke-width="0.6" paint-order="stroke">Ligure</text>
<text x="467" y="70" font-family="Liberation Sans" font-size="13.5" fill="#888" opacity="0.6">Zürich</text>
<text x="688" y="81" font-family="Liberation Sans" font-size="13.5" fill="#888" opacity="0.6">Innsbruck</text>
</svg>
<!-- /MAPSVG -->
  <div class="a" style="left:0;top:0;width:1159px;height:43px;background:#359a36;border-top:1px solid #d8d0d8;border-right:1px solid #d8d0d8"></div>
  <div class="a tb" style="left:9px;width:607px"><div class="tbb" style="left:0px;width:71px"><svg style="left:5px;transform:translate(0,-50%)" width="12" height="12" viewBox="0 0 12 12"><circle cx="5" cy="5" r="3.7" stroke="#333" stroke-width="1.9" fill="none"/><path d="M7.6 7.6 L11 11" stroke="#333" stroke-width="2.1" stroke-linecap="round"/></svg><span class="tbt" style="left:24.6px">Search</span></div><div class="tbb" style="left:71px;width:85.7px"><svg style="left:5.4px;transform:translate(0,-50%)" width="13" height="11" viewBox="0 0 13 11"><g fill="#333"><rect x="0" y="0.5" width="2.4" height="2.4"/><rect x="0" y="4.3" width="2.4" height="2.4"/><rect x="0" y="8.1" width="2.4" height="2.4"/><rect x="3.6" y="0.8" width="9.2" height="1.8"/><rect x="3.6" y="4.6" width="9.2" height="1.8"/><rect x="3.6" y="8.4" width="9.2" height="1.8"/></g></svg><span class="tbt" style="left:24.9px">Layer List</span></div><div class="tbb" style="left:156.7px;width:22.2px"><svg width="11" height="11" viewBox="0 0 11 11"><path d="M5.5 0.5V10.5M0.5 5.5H10.5" stroke="#333" stroke-width="2.4"/></svg></div><div class="tbb" style="left:178.9px;width:22.35px"><svg width="11" height="4" viewBox="0 0 11 4"><path d="M0.5 2H10.5" stroke="#333" stroke-width="2.4"/></svg></div><div class="tbb" style="left:201.25px;width:22.05px"><svg width="8" height="8" viewBox="0 0 8 8"><path d="M4 1 L1.2 4 L4 7 M7 1 L4.2 4 L7 7" stroke="#666" stroke-width="1.3" fill="none"/></svg></div><div class="tbb" style="left:223.3px;width:22px"><svg width="5" height="11" viewBox="0 0 5 11"><circle cx="2.6" cy="1.4" r="1.4" fill="#333"/><path d="M0.6 4H3.6V9.3H4.6V10.8H0.4V9.3H1.4V5.4H0.6Z" fill="#333"/></svg></div><div class="tbb" style="left:245.3px;width:22.4px"><svg width="8" height="11" viewBox="0 0 8 11"><path d="M0.5 0.5 L7.5 6.2 L4.6 6.6 L6.2 10 L5 10.6 L3.4 7.2 L0.5 9.2Z" fill="#333"/></svg></div><div class="tbb" style="left:267.7px;width:22.1px"><svg width="11" height="11" viewBox="0 0 11 11"><rect x="0.8" y="0.8" width="9.4" height="9.4" stroke="#333" stroke-width="1.2" fill="none" stroke-dasharray="1.6 1.2"/></svg></div><div class="tbb" style="left:289.8px;width:22.5px"><svg width="12" height="12" viewBox="0 0 12 12"><path d="M6 0.3 L11.7 6 L6 11.7 L0.3 6Z" fill="#333"/><path d="M6 3.2 L7.2 4.8 L8.8 6 L7.2 7.2 L6 8.8 L4.8 7.2 L3.2 6 L4.8 4.8Z" fill="#fff"/><path d="M3.6 3.6L8.4 8.4M8.4 3.6L3.6 8.4" stroke="#fff" stroke-width="1.3"/></svg></div><div class="tbb" style="left:312.3px;width:22.2px"><svg style="margin-left:-1px" width="10" height="12" viewBox="0 0 10 12"><ellipse cx="5" cy="10.2" rx="4.6" ry="1.6" fill="#333"/><ellipse cx="5" cy="10.1" rx="3" ry="0.7" fill="#fff"/><circle cx="5" cy="1.6" r="1.6" fill="#333"/><path d="M3.2 3.6H6.8V7.4H6.1V10.4H3.9V7.4H3.2Z" fill="#333"/></svg></div><div class="tbb" style="left:334.5px;width:22.1px"><svg width="12" height="12" viewBox="0 0 12 12"><circle cx="5" cy="5" r="3.9" stroke="#333" stroke-width="1.6" fill="none"/><path d="M5 3V7M3 5H7" stroke="#333" stroke-width="1"/><path d="M7.9 7.9L11.2 11.2" stroke="#333" stroke-width="1.9" stroke-linecap="round"/></svg></div><div class="tbb" style="left:356.6px;width:21.9px"><svg width="11" height="11" viewBox="0 0 11 11"><circle cx="5.5" cy="5.5" r="5.2" fill="#333"/><path d="M2.5 2.2 C4 1.5 5 3 4.6 4 C4 5.3 6 5.5 6.3 6.8 C6.5 8 5.2 9 6.2 10.3 L4.5 10.4 C3.5 9 3 7 2 6 C1 5 1.5 3 2.5 2.2Z M7 1.2 C8.5 2 9 2.5 8.3 3.5 C7.6 3 7 2.3 7 1.2Z" fill="#fff" opacity="0.85"/></svg></div><div class="tbb" style="left:378.5px;width:21.9px"><svg width="12" height="11" viewBox="0 0 12 11"><path d="M3 0.5H7.5L9 2V4H3Z" fill="#333"/><rect x="0.5" y="4" width="11" height="4.5" rx="1" fill="#333"/><rect x="3" y="7" width="6" height="3.5" fill="#333" stroke="#fff" stroke-width="0.8"/></svg></div><div class="tbb" style="left:400.4px;width:22.1px"><svg width="12" height="11" viewBox="0 0 12 11"><path d="M0.5 1H11.5" stroke="#777" stroke-width="0.8" stroke-dasharray="1 1"/><rect x="1" y="4" width="10" height="5" stroke="#555" stroke-width="1.6" fill="none"/></svg></div><div class="tbb" style="left:422.5px;width:16.1px"></div><div class="tbb" style="left:438.6px;width:168px;border-right:1px solid #d6d6d6"><svg style="left:12.1px;transform:translate(-50%,-50%)" width="4" height="12" viewBox="0 0 4 12"><circle cx="2" cy="1.8" r="1.5" fill="#333"/><circle cx="2" cy="6" r="1.5" fill="#333"/><circle cx="2" cy="10.2" r="1.5" fill="#333"/></svg><span class="tbt" style="left:31px;top:4px;font-size:9.6px;letter-spacing:-0.5px;color:#3d8fbd">1819812.7694, 5831228.0138</span></div></div>
<div id="lp" class="a">
<div class="a" style="left:0;top:0;width:287px;height:25px;background:#f7f7f7;border-bottom:1px solid #e3e3e3"></div>
<div class="a" style="left:9.5px;top:6px;font-size:10.6px;color:#3b8ab5;white-space:nowrap">Mineral resources in Cro<span style="color:#aaa">...</span></div>
<svg class="a" style="left:269.5px;top:6px" width="11" height="11" viewBox="0 0 11 11"><circle cx="5.5" cy="5.5" r="5.3" fill="#333"/><path d="M2.5 2.2 C4 1.5 5 3 4.6 4 C4 5.3 6 5.5 6.3 6.8 C6.5 8 5.2 9 6.2 10.3 L4.5 10.4 C3.5 9 3 7 2 6 C1 5 1.5 3 2.5 2.2Z M7 1.2 C8.5 2 9 2.5 8.3 3.5 C7.6 3 7 2.3 7 1.2Z" fill="#fff" opacity="0.85"/></svg>
<div class="a" style="left:0;top:25px;width:287px;height:23.7px;background:#f5f5f5;border-bottom:1px solid #e3e3e3"></div>
<div class="a" style="left:26px;top:33.4px;line-height:0"><svg style="display:block" width="11" height="9" viewBox="0 0 11 9"><path d="M0.8 4.6 L3.9 7.6 L10.2 1.2" stroke="#555" stroke-width="2.3" fill="none"/></svg></div>
<svg class="a" style="left:48px;top:31px" width="9" height="11" viewBox="0 0 9 11"><path d="M2 5V3.2A2.5 2.5 0 0 1 7 3.2V5" stroke="#666" stroke-width="1.5" fill="none"/><rect x="0.5" y="5" width="8" height="6" rx="0.8" fill="#666"/></svg>
<svg class="a" style="left:187.5px;top:29.5px" width="11" height="11" viewBox="0 0 11 11"><path d="M5.5 0.5V10.5M0.5 5.5H10.5" stroke="#777" stroke-width="2.2"/></svg>
<svg class="a" style="left:208px;top:34px" width="11" height="3" viewBox="0 0 11 3"><path d="M0.5 1.5H10.5" stroke="#777" stroke-width="2.2"/></svg>
<svg class="a" style="left:229.5px;top:30px" width="11" height="10" viewBox="0 0 11 10"><path d="M0.5 1.5Q0.5 0.5 1.5 0.5H4L5 1.8H9.5Q10.5 1.8 10.5 2.8V8.8Q10.5 9.5 9.5 9.5H1.5Q0.5 9.5 0.5 8.8Z" fill="#777"/></svg>
<svg class="a" style="left:251px;top:29.5px" width="10" height="11" viewBox="0 0 10 11"><circle cx="5" cy="2.8" r="2.6" fill="#777"/><path d="M0.3 10.5V8.5Q0.3 6 3 6H7Q9.7 6 9.7 8.5V10.5Z" fill="#777"/></svg>
<svg class="a" style="left:271px;top:29px" width="12" height="12" viewBox="0 0 12 12"><circle cx="5" cy="5" r="3.9" stroke="#777" stroke-width="1.3" fill="none"/><path d="M5 3V7M3 5H7" stroke="#777" stroke-width="0.9"/><path d="M7.8 7.8L11.3 11.3" stroke="#777" stroke-width="1.8" stroke-linecap="round"/></svg>
<div class="a" style="left:0;top:48.7px;width:268px;height:356px;background:#fff"></div>
<div class="row" style="top:48.7px"><div class="ck" style="left:5.5px;top:7.5px"><svg width="10" height="7" viewBox="0 0 10 7"><path d="M1 1.2 L5 5.2 L9 1.2" stroke="#222" stroke-width="2" fill="none"/></svg></div><div class="ck" style="left:26.5px;top:6px"><svg width="11" height="9" viewBox="0 0 11 9"><path d="M0.8 4.6 L3.9 7.6 L10.2 1.2" stroke="#c8c8c8" stroke-width="2.3" fill="none"/></svg></div><svg class="a" style="left:46.5px;top:5px" width="14" height="11" viewBox="0 0 14 11"><path d="M0.5 1Q0.5 0.3 1.2 0.3H4.3L5.3 1.5H10.2Q11 1.5 11 2.3V3.6H3L0.5 9Z" fill="#333"/><path d="M3.4 4.6H13.6L10.8 10.5H0.6Z" fill="#333"/></svg><div class="rt" style="left:66.7px;color:#555;font-size:10.8px">Resources</div></div>
<div class="row" style="top:70.5px;background:#bfe8fa;height:21.5px"><div class="ck" style="left:26.5px;top:8px"><svg width="10" height="7" viewBox="0 0 10 7"><path d="M1 1.2 L5 5.2 L9 1.2" stroke="#222" stroke-width="2" fill="none"/></svg></div><div class="ck" style="left:48px;top:6.5px"><svg width="11" height="9" viewBox="0 0 11 9"><path d="M0.8 4.6 L3.9 7.6 L10.2 1.2" stroke="#222" stroke-width="2.3" fill="none"/></svg></div><svg class="a" style="left:70px;top:5px" width="9" height="12" viewBox="0 0 9 12"><path d="M2 5.5V3.5A2.5 2.5 0 0 1 7 3.5" stroke="#a8c4cf" stroke-width="1.5" fill="none"/><rect x="0.5" y="5.5" width="8" height="6" rx="0.8" fill="#a8c4cf"/></svg><svg class="a" style="left:91.5px;top:6px" width="10" height="10" viewBox="0 0 10 10"><g><rect x="0" y="0" width="2.6" height="2.6" fill="#f47a7a"/><rect x="3.7" y="0" width="2.6" height="2.6" fill="#f4a07a"/><rect x="7.4" y="0" width="2.6" height="2.6" fill="#f4d04a"/><rect x="0" y="3.7" width="2.6" height="2.6" fill="#7ad4f4"/><rect x="3.7" y="3.7" width="2.6" height="2.6" fill="#4ae07a"/><rect x="7.4" y="3.7" width="2.6" height="2.6" fill="#f4a0c4"/><rect x="0" y="7.4" width="2.6" height="2.6" fill="#4a7ad4"/><rect x="3.7" y="7.4" width="2.6" height="2.6" fill="#c47af4"/><rect x="7.4" y="7.4" width="2.6" height="2.6" fill="#f47ab4"/></g></svg><div class="rt" style="left:107.3px;color:#444;font-size:10.8px">Mineral resources</div></div>
<div class="row" style="top:92.0px"><div class="ck" style="left:69px;top:6.5px"><svg width="11" height="9" viewBox="0 0 11 9"><path d="M0.8 4.6 L3.9 7.6 L10.2 1.2" stroke="#222" stroke-width="2.3" fill="none"/></svg></div><div class="lg" style="background:#fff;border:1px solid #999;width:9.5px;height:9.5px"></div><div class="rt" style="left:107.7px">Brick clay</div></div>
<div class="row" style="top:113.3px"><div class="ck" style="left:69px;top:6.5px"><svg width="11" height="9" viewBox="0 0 11 9"><path d="M0.8 4.6 L3.9 7.6 L10.2 1.2" stroke="#222" stroke-width="2.3" fill="none"/></svg></div><svg class="lg" style="left:90px;top:4px;width:14px;height:14px" viewBox="0 0 14 14"><path d="M0 2H14M0 5.5H14M0 9H14M0 12.5H14" stroke="#a5d8f3" stroke-width="1"/></svg><div class="rt" style="left:107.7px">Carbonate minerals for industry</div></div>
<div class="row" style="top:134.6px"><div class="ck" style="left:69px;top:6.5px"><svg width="11" height="9" viewBox="0 0 11 9"><path d="M0.8 4.6 L3.9 7.6 L10.2 1.2" stroke="#222" stroke-width="2.3" fill="none"/></svg></div><div class="lg" style="background:#fff;border:1px solid #999;width:9.5px;height:9.5px"></div><div class="rt" style="left:107.7px">Ceramic and brick clay</div></div>
<div class="row" style="top:155.9px"><div class="ck" style="left:69px;top:6.5px"><svg width="11" height="9" viewBox="0 0 11 9"><path d="M0.8 4.6 L3.9 7.6 L10.2 1.2" stroke="#222" stroke-width="2.3" fill="none"/></svg></div><div class="lg" style="background:#fff;border:1px solid #999;width:9.5px;height:9.5px"></div><div class="rt" style="left:107.7px">Ceramic and refractory clay</div></div>
<div class="row" style="top:177.2px"><div class="ck" style="left:69px;top:6.5px"><svg width="11" height="9" viewBox="0 0 11 9"><path d="M0.8 4.6 L3.9 7.6 L10.2 1.2" stroke="#222" stroke-width="2.3" fill="none"/></svg></div><svg class="lg" style="left:91px;top:4px;width:13px;height:13px" viewBox="0 0 13 13"><path d="M1 0V13M4.5 0V13M8 0V13M11.5 0V13" stroke="#333" stroke-width="1.6"/></svg><div class="rt" style="left:107.7px">Crushed stone aggregate</div></div>
<div class="row" style="top:198.5px"><div class="ck" style="left:69px;top:6.5px"><svg width="11" height="9" viewBox="0 0 11 9"><path d="M0.8 4.6 L3.9 7.6 L10.2 1.2" stroke="#222" stroke-width="2.3" fill="none"/></svg></div><div class="lg" style="background:#d8979a;border:1px solid #999;width:9.5px;height:9.5px"></div><div class="rt" style="left:107.7px">Dimension stone</div></div>
<div class="row" style="top:219.8px"><div class="ck" style="left:69px;top:6.5px"><svg width="11" height="9" viewBox="0 0 11 9"><path d="M0.8 4.6 L3.9 7.6 L10.2 1.2" stroke="#222" stroke-width="2.3" fill="none"/></svg></div><svg class="lg" style="left:90px;top:4px;width:14px;height:14px" viewBox="0 0 14 14"><g fill="#f3c33f"><circle cx="9" cy="2" r="0.9"/><circle cx="5" cy="7" r="0.9"/><circle cx="10" cy="8" r="0.9"/><circle cx="1.5" cy="11" r="0.9"/><circle cx="12" cy="12" r="0.9"/><circle cx="7" cy="12.5" r="0.9"/></g></svg><div class="rt" style="left:107.7px">Flint sand</div></div>
<div class="row" style="top:241.1px"><div class="ck" style="left:69px;top:6.5px"><svg width="11" height="9" viewBox="0 0 11 9"><path d="M0.8 4.6 L3.9 7.6 L10.2 1.2" stroke="#222" stroke-width="2.3" fill="none"/></svg></div><svg class="lg" style="left:90px;top:4px;width:14px;height:14px" viewBox="0 0 14 14"><g fill="#f3c33f"><circle cx="9" cy="2" r="0.9"/><circle cx="5" cy="7" r="0.9"/><circle cx="10" cy="8" r="0.9"/><circle cx="1.5" cy="11" r="0.9"/><circle cx="12" cy="12" r="0.9"/><circle cx="7" cy="12.5" r="0.9"/></g></svg><div class="rt" style="left:107.7px">Flint sediment</div></div>
<div class="row" style="top:262.4px"><div class="ck" style="left:69px;top:6.5px"><svg width="11" height="9" viewBox="0 0 11 9"><path d="M0.8 4.6 L3.9 7.6 L10.2 1.2" stroke="#222" stroke-width="2.3" fill="none"/></svg></div><div class="lg" style="background:#f39a18;border:1px solid #9a8a7a;width:9.5px;height:9.5px"></div><div class="rt" style="left:107.7px">Gypsum</div></div>
<div class="row" style="top:283.7px"><div class="ck" style="left:69px;top:6.5px"><svg width="11" height="9" viewBox="0 0 11 9"><path d="M0.8 4.6 L3.9 7.6 L10.2 1.2" stroke="#222" stroke-width="2.3" fill="none"/></svg></div><div class="lg" style="background:#6e6e6e;border:1px solid #444;width:9.5px;height:9.5px"></div><div class="rt" style="left:107.7px">Mineral resources for production c</div></div>
<div class="row" style="top:305.0px"><div class="ck" style="left:69px;top:6.5px"><svg width="11" height="9" viewBox="0 0 11 9"><path d="M0.8 4.6 L3.9 7.6 L10.2 1.2" stroke="#222" stroke-width="2.3" fill="none"/></svg></div><svg class="lg" style="left:90px;top:4px;width:14px;height:14px" viewBox="0 0 14 14"><g fill="#a4a9dc"><circle cx="2" cy="2" r="0.7"/><circle cx="7" cy="1.5" r="0.7"/><circle cx="12" cy="3" r="0.7"/><circle cx="4.5" cy="5" r="0.7"/><circle cx="9.5" cy="6.5" r="0.7"/><circle cx="1.5" cy="8.5" r="0.7"/><circle cx="6" cy="9" r="0.7"/><circle cx="12.5" cy="9.5" r="0.7"/><circle cx="3.5" cy="12.5" r="0.7"/><circle cx="8.5" cy="12.5" r="0.7"/></g></svg><div class="rt" style="left:107.7px">Sand and gravel for construction</div></div>
<div class="row" style="top:326.3px"><div class="ck" style="left:69px;top:6.5px"><svg width="11" height="9" viewBox="0 0 11 9"><path d="M0.8 4.6 L3.9 7.6 L10.2 1.2" stroke="#222" stroke-width="2.3" fill="none"/></svg></div><svg class="lg" style="left:90px;top:4px;width:14px;height:14px" viewBox="0 0 14 14"><g fill="#a4a9dc"><circle cx="2" cy="2" r="0.7"/><circle cx="7" cy="1.5" r="0.7"/><circle cx="12" cy="3" r="0.7"/><circle cx="4.5" cy="5" r="0.7"/><circle cx="9.5" cy="6.5" r="0.7"/><circle cx="1.5" cy="8.5" r="0.7"/><circle cx="6" cy="9" r="0.7"/><circle cx="12.5" cy="9.5" r="0.7"/><circle cx="3.5" cy="12.5" r="0.7"/><circle cx="8.5" cy="12.5" r="0.7"/></g></svg><div class="rt" style="left:107.7px">Sand and gravel for construction-e</div></div>
<div class="row" style="top:347.6px"><div class="ck" style="left:69px;top:6.5px"><svg width="11" height="9" viewBox="0 0 11 9"><path d="M0.8 4.6 L3.9 7.6 L10.2 1.2" stroke="#222" stroke-width="2.3" fill="none"/></svg></div><div class="lg" style="background:#3ee05c;border:1px solid #7a9a7a;width:9.5px;height:9.5px"></div><div class="rt" style="left:107.7px">Silicate minerals for industry</div></div>
<div class="row" style="top:368.9px"><div class="ck" style="left:69px;top:6.5px"><svg width="11" height="9" viewBox="0 0 11 9"><path d="M0.8 4.6 L3.9 7.6 L10.2 1.2" stroke="#222" stroke-width="2.3" fill="none"/></svg></div><svg class="lg" style="left:90px;top:4px;width:14px;height:14px" viewBox="0 0 14 14"><path d="M3 3 L4.5 1.5 L6 3M9 10.5 L10.5 9 L12 10.5" stroke="#333" stroke-width="0.9" fill="none"/><circle cx="1.5" cy="13" r="0.5" fill="#555"/></svg><div class="rt" style="left:107.7px">Tuff</div></div>
<div class="row" style="top:390.2px"><div class="ck" style="left:69px;top:6.5px"><svg width="11" height="9" viewBox="0 0 11 9"><path d="M0.8 4.6 L3.9 7.6 L10.2 1.2" stroke="#222" stroke-width="2.3" fill="none"/></svg></div><div class="lg" style="background:#e8143d;border:1px solid #9a5a5a;width:9.5px;height:9.5px"></div><div class="rt" style="left:107.7px">Bauxite</div></div>
<div class="a" style="left:267.5px;top:48.7px;width:19.5px;height:356px;background:#f1f1f1"></div>
<div class="a" style="left:269px;top:69.4px;width:16px;height:238px;background:#c1c1c1"></div>
<svg class="a" style="left:272px;top:57px" width="10" height="6" viewBox="0 0 10 6"><path d="M0 6L5 0.5L10 6Z" fill="#a3a3a3"/></svg>
<svg class="a" style="left:272px;top:390.6px" width="10" height="6" viewBox="0 0 10 6"><path d="M0 0L5 5.5L10 0Z" fill="#505050"/></svg>
</div>
<div id="ins" class="a">
<div class="a" style="left:18px;top:18px;font-size:23.6px;color:#3a3a3a;white-space:nowrap">Instructions</div>
<div class="a" style="left:291px;top:6px;font-size:18.5px;color:#c4c4c4">x</div>
<div class="a ip" style="top:75.2px">This Map Portal shows all of Croatia's<br>exploitation fields of mineral resources. Data<br>collected is based on public document<br>"Management strategy for mineral resources in<br>Croatia". Also, credits to HAOP for providing the<br>data on mineral resources. All of the data is<br>divided into four maps.</div>
<div class="a ip" style="top:206.3px">In <b>Mineral resources</b> map you can see all of<br>mineral resources in Croatia and also it is<br>possible to use filter to divide them by mineral<br>aggregates.</div>
<div class="a ip" style="top:284.3px">Second map, <b>Hydrocarbon resources</b>, shows<br>all of Croatia's hydrocarbon resources, mostly<br>oil fields and some geothermal water fields.</div>
<div class="a ip" style="top:345.1px;height:31.4px;overflow:hidden">In <b>Resources in counties</b> map it is possible to<br>show mineral aggregates in each county by</div>
<div class="a" style="left:291.5px;top:62px;width:18.5px;height:314.5px;background:#f1f1f1"></div>
<div class="a" style="left:292.5px;top:82px;width:16px;height:172.8px;background:#c1c1c1"></div>
<svg class="a" style="left:296px;top:69.5px" width="10" height="6" viewBox="0 0 10 6"><path d="M0 6L5 0.5L10 6Z" fill="#a3a3a3"/></svg>
<svg class="a" style="left:296px;top:363px" width="10" height="6" viewBox="0 0 10 6"><path d="M0 0L5 5.5L10 0Z" fill="#505050"/></svg>
</div>
<div class="a" style="left:544.5px;top:661.2px;width:70px;height:22px;background:#fff;border:1px solid #b0b0b0;border-bottom:none;border-radius:4px 4px 0 0;box-shadow:0 0 5px rgba(0,0,0,0.3)">
<svg class="a" style="left:5.5px;top:4.8px" width="10" height="10" viewBox="0 0 10 10"><g fill="#555"><rect x="0" y="0" width="2.2" height="6"/><rect x="3.8" y="0" width="2.2" height="6"/><rect x="7.6" y="0" width="2.2" height="6"/><rect x="0" y="7.5" width="2.2" height="2.2"/><rect x="3.8" y="7.5" width="2.2" height="2.2"/><rect x="7.6" y="7.5" width="2.2" height="2.2"/></g></svg>
<div class="a" style="left:23.3px;top:3px;font-size:10.3px;color:#555">Data</div>
<svg class="a" style="left:52.5px;top:3.8px" width="8" height="11" viewBox="0 0 8 11"><path d="M4 0L8 4.5H5.3V11H2.7V4.5H0Z" fill="#888"/></svg>
</div>
<svg class="a" style="left:8px;top:9px" width="38" height="27" viewBox="374 17 38 27">
<g fill="#fff"><circle cx="398.5" cy="26" r="8.6"/><circle cx="386.5" cy="31" r="6.4"/><circle cx="406" cy="33.5" r="5.6"/><circle cx="394" cy="35" r="6"/><rect x="381" y="33" width="26" height="7.5" rx="3"/></g>
<text x="374.6" y="43.6" font-family="Liberation Sans" font-weight="bold" font-size="13.6" letter-spacing="-0.6" fill="#fff" stroke="#359a36" stroke-width="2" paint-order="stroke">GIS</text>
</svg>
<svg class="a" style="left:67.5px;top:15px" width="16" height="16" viewBox="0 0 16 16"><circle cx="6.6" cy="6.6" r="4.7" stroke="#fff" stroke-width="2.3" fill="none"/><path d="M10 10L14.5 14.5" stroke="#fff" stroke-width="2.6" stroke-linecap="round"/></svg>
  <div class="a nav" style="left:107.4px">Instructions</div>
  <div class="a nav" style="left:197.7px">Filters</div>
  <div class="a nav" style="left:258px">Mineral resources</div>
  <div class="a nav" style="left:383.4px">Hydrocarbon resources</div>
  <div class="a nav" style="left:538.6px">Resources in counties</div>
  <div class="a nav" style="left:687.7px">Heatmap of resources</div>
  <div class="a nav" style="left:836.2px">Export Map</div>
  <div class="a nav" style="left:926.3px">Export Layer</div>
  <div class="a nav" style="left:1093px;top:12px">Log Out</div>
</div>
</body></html>
